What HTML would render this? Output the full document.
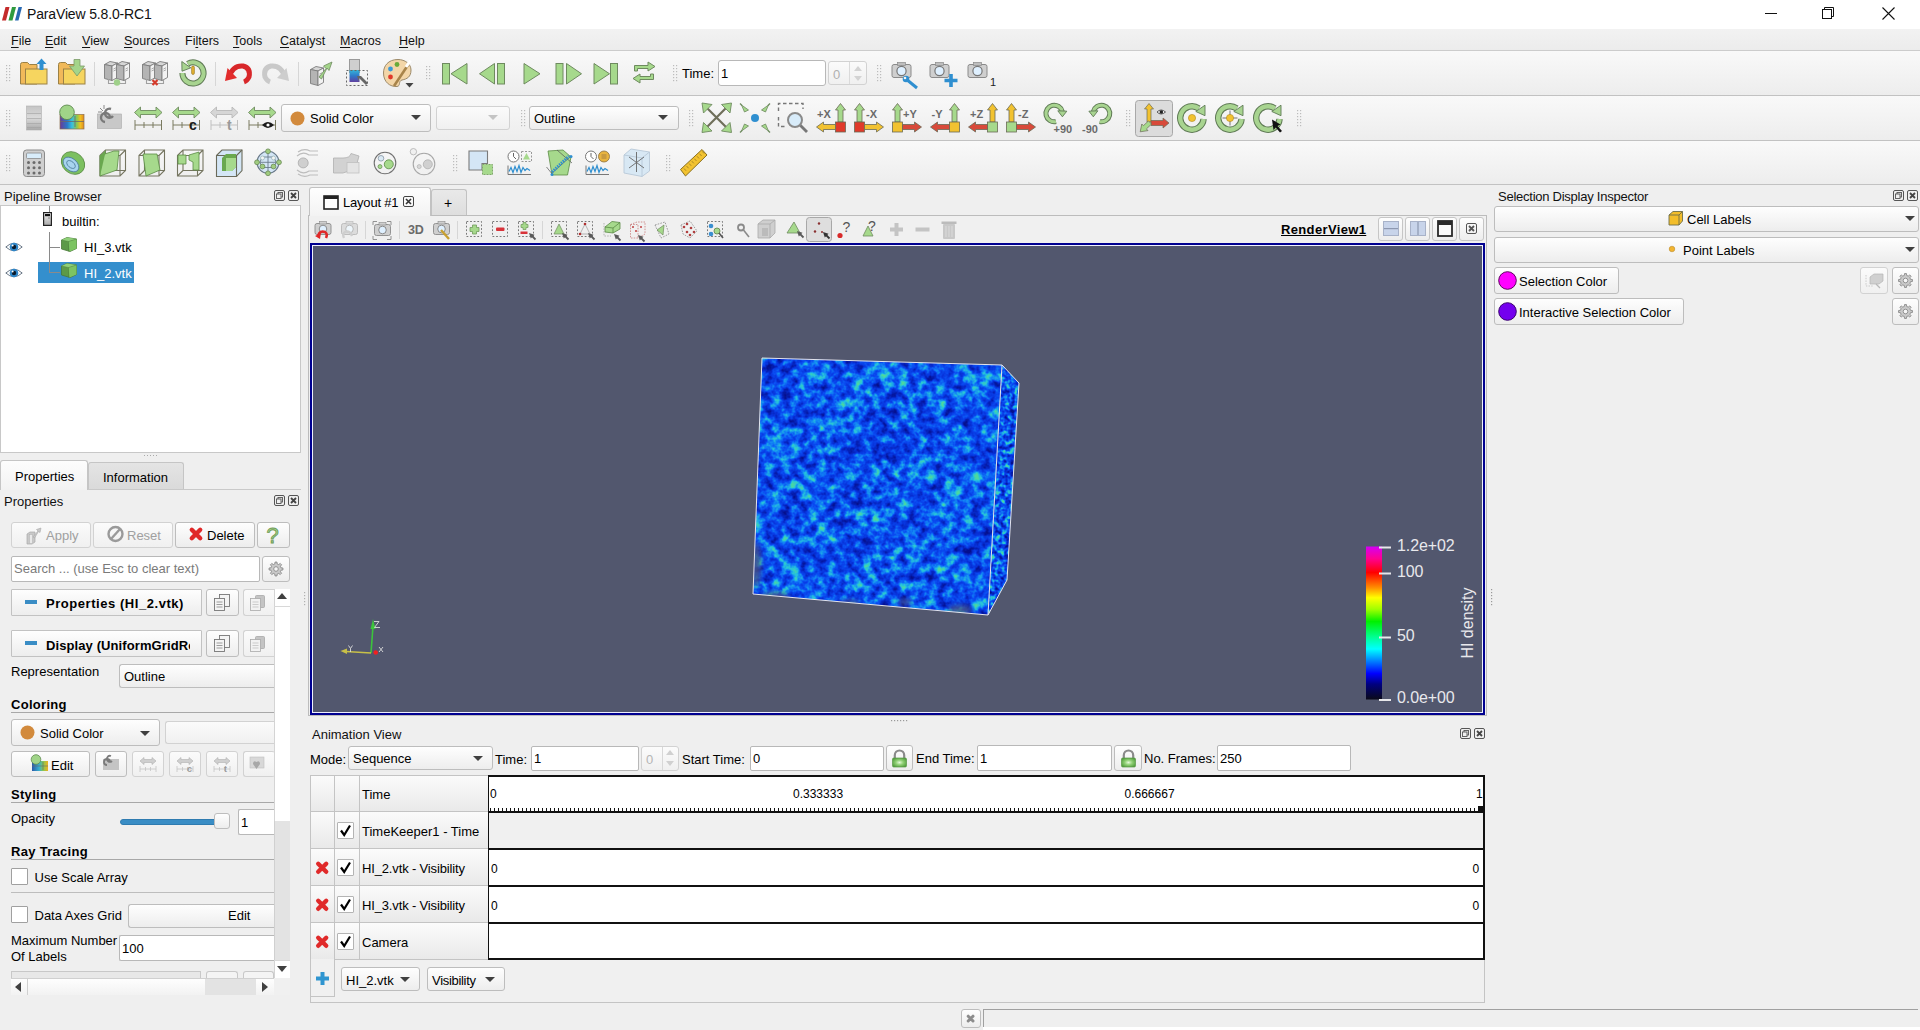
<!DOCTYPE html>
<html><head><meta charset="utf-8"><title>ParaView 5.8.0-RC1</title>
<style>
*{box-sizing:border-box;margin:0;padding:0}
html,body{width:1920px;height:1030px;overflow:hidden;background:#efefef;font-family:"Liberation Sans",sans-serif;font-size:13px;color:#000}
.a{position:absolute}
.t{position:absolute;white-space:nowrap}
.tb{position:absolute;background:linear-gradient(#f9f9f9,#ededed)}
.btn{position:absolute;border:1px solid #bdbdbd;border-radius:3px;background:linear-gradient(#fefefe,#ededed)}
.btnd{position:absolute;border:1px solid #d2d2d2;border-radius:3px;background:linear-gradient(#fbfbfb,#f0f0f0)}
.inp{position:absolute;border:1px solid #b8b8b8;border-radius:2px;background:#fff}
svg{position:absolute;overflow:visible}
u{text-decoration:underline;text-underline-offset:2px}
</style></head><body>

<div class="a" style="left:0px;top:0px;width:1920px;height:29px;background:#fff"></div>
<svg style="left:2px;top:7px" width="20" height="14" viewBox="0 0 20 14"><polygon points="3.5,0 7.5,0 4,13.5 0,13.5" fill="#c42b2b"/><polygon points="10,0 14,0 10.5,13.5 6.5,13.5" fill="#2e9a3e"/><polygon points="16.5,0 20,0 16.5,13.5 13,13.5" fill="#2868b2"/></svg>
<div class="t" style="left:27px;top:6.45px;font-size:14px;line-height:17px;color:#111;letter-spacing:-0.15px">ParaView 5.8.0-RC1</div>
<div class="a" style="left:1765px;top:13px;width:12px;height:1px;background:#111"></div>
<svg style="left:1822px;top:7px" width="13" height="13" viewBox="0 0 13 13"><rect x="0.5" y="2.5" width="9" height="9" fill="none" stroke="#111"/><path d="M2.5 2.5V0.5H11.5V9.5H9.5" fill="none" stroke="#111"/></svg>
<svg style="left:1882px;top:7px" width="13" height="13" viewBox="0 0 13 13"><path d="M0.5 0.5L12.5 12.5M12.5 0.5L0.5 12.5" stroke="#111" stroke-width="1.1"/></svg>
<div class="a" style="left:0px;top:29px;width:1920px;height:22px;background:linear-gradient(#f2f2f2,#ececec);border-bottom:1px solid #cccccc"></div>
<div class="t" style="left:11px;top:33.72px;font-size:12.5px;line-height:15.5px;color:#111;"><u>F</u>ile</div>
<div class="t" style="left:45px;top:33.72px;font-size:12.5px;line-height:15.5px;color:#111;"><u>E</u>dit</div>
<div class="t" style="left:82px;top:33.72px;font-size:12.5px;line-height:15.5px;color:#111;"><u>V</u>iew</div>
<div class="t" style="left:124px;top:33.72px;font-size:12.5px;line-height:15.5px;color:#111;"><u>S</u>ources</div>
<div class="t" style="left:185px;top:33.72px;font-size:12.5px;line-height:15.5px;color:#111;">Fi<u>l</u>ters</div>
<div class="t" style="left:233px;top:33.72px;font-size:12.5px;line-height:15.5px;color:#111;"><u>T</u>ools</div>
<div class="t" style="left:280px;top:33.72px;font-size:12.5px;line-height:15.5px;color:#111;"><u>C</u>atalyst</div>
<div class="t" style="left:340px;top:33.72px;font-size:12.5px;line-height:15.5px;color:#111;"><u>M</u>acros</div>
<div class="t" style="left:399px;top:33.72px;font-size:12.5px;line-height:15.5px;color:#111;"><u>H</u>elp</div>
<div class="tb" style="left:0;top:51px;width:1920px;height:45px;border-bottom:1px solid #c2c2c2"></div>
<div class="tb" style="left:0;top:96px;width:1920px;height:45px;border-bottom:1px solid #c2c2c2"></div>
<div class="tb" style="left:0;top:141px;width:1920px;height:44px;border-bottom:1px solid #c2c2c2"></div>
<svg style="left:0;top:0" width="1920" height="200" viewBox="0 0 1920 200"><rect x="6" y="65" width="1.2" height="1.2" fill="#bcbcbc"/><rect x="9" y="65" width="1.2" height="1.2" fill="#bcbcbc"/><rect x="6" y="68" width="1.2" height="1.2" fill="#bcbcbc"/><rect x="9" y="68" width="1.2" height="1.2" fill="#bcbcbc"/><rect x="6" y="71" width="1.2" height="1.2" fill="#bcbcbc"/><rect x="9" y="71" width="1.2" height="1.2" fill="#bcbcbc"/><rect x="6" y="74" width="1.2" height="1.2" fill="#bcbcbc"/><rect x="9" y="74" width="1.2" height="1.2" fill="#bcbcbc"/><rect x="6" y="77" width="1.2" height="1.2" fill="#bcbcbc"/><rect x="9" y="77" width="1.2" height="1.2" fill="#bcbcbc"/><rect x="6" y="80" width="1.2" height="1.2" fill="#bcbcbc"/><rect x="9" y="80" width="1.2" height="1.2" fill="#bcbcbc"/><path d="M20.5 84V64.5Q20.5 62.5 22.5 62.5H27.5L29.5 64.5H37V84Z" fill="#f1b95a" stroke="#9b8146"/><rect x="25.5" y="69" width="21.5" height="15" fill="#f6d55f" stroke="#9b8146"/><polygon points="41.5,58.5 46.5,64 43.5,64 43.5,70 39.5,70 39.5,64 36.5,64" fill="#2f8fd0"/><path d="M58.5 84V64.5Q58.5 62.5 60.5 62.5H65.5L67.5 64.5H75V84Z" fill="#f1b95a" stroke="#9b8146"/><rect x="63.5" y="69" width="21.5" height="15" fill="#f6d55f" stroke="#9b8146"/><polygon points="74,59.5 80,59.5 80,66 84.5,66 77,76 69.5,66 74,66" fill="#a4d58a" stroke="#7c9a6a" stroke-width="0.8"/><rect x="94" y="62" width="1" height="24" fill="#d6d6d6"/><polygon points="104.5,64.5 110,61.5 117.5,63 112,66" fill="#d6d6d6" stroke="#7d7d7d" stroke-width="0.9"/><polygon points="104.5,64.5 112,66 112,80.5 104.5,78.5" fill="#b4b4b4" stroke="#7d7d7d" stroke-width="0.9"/><polygon points="112,66 117.5,63 117.5,77.5 112,80.5" fill="#f2f2f2" stroke="#7d7d7d" stroke-width="0.9"/><path d="M113.5 69L116 67.8M113.5 71L116 69.8" stroke="#8a8a8a" stroke-width="0.7"/><polygon points="116.5,64.5 122,61.5 129.5,63 124,66" fill="#d6d6d6" stroke="#7d7d7d" stroke-width="0.9"/><polygon points="116.5,64.5 124,66 124,80.5 116.5,78.5" fill="#b4b4b4" stroke="#7d7d7d" stroke-width="0.9"/><polygon points="124,66 129.5,63 129.5,77.5 124,80.5" fill="#f2f2f2" stroke="#7d7d7d" stroke-width="0.9"/><path d="M125.5 69L128 67.8M125.5 71L128 69.8" stroke="#8a8a8a" stroke-width="0.7"/><path d="M108.5 79v4.5h17v-4.5" fill="none" stroke="#a0a0a0" stroke-width="1.1"/><circle cx="117" cy="82.5" r="3.2" fill="#9fd08a"/><polygon points="142.5,64.5 148,61.5 155.5,63 150,66" fill="#d6d6d6" stroke="#7d7d7d" stroke-width="0.9"/><polygon points="142.5,64.5 150,66 150,80.5 142.5,78.5" fill="#b4b4b4" stroke="#7d7d7d" stroke-width="0.9"/><polygon points="150,66 155.5,63 155.5,77.5 150,80.5" fill="#f2f2f2" stroke="#7d7d7d" stroke-width="0.9"/><path d="M151.5 69L154 67.8M151.5 71L154 69.8" stroke="#8a8a8a" stroke-width="0.7"/><polygon points="154.5,64.5 160,61.5 167.5,63 162,66" fill="#d6d6d6" stroke="#7d7d7d" stroke-width="0.9"/><polygon points="154.5,64.5 162,66 162,80.5 154.5,78.5" fill="#b4b4b4" stroke="#7d7d7d" stroke-width="0.9"/><polygon points="162,66 167.5,63 167.5,77.5 162,80.5" fill="#f2f2f2" stroke="#7d7d7d" stroke-width="0.9"/><path d="M163.5 69L166 67.8M163.5 71L166 69.8" stroke="#8a8a8a" stroke-width="0.7"/><path d="M146.5 79v4.5h17v-4.5" fill="none" stroke="#a0a0a0" stroke-width="1.1"/><path d="M152.5 80l5 5M157.5 80l-5 5" stroke="#d43a2a" stroke-width="2.2"/><path d="M187.7 63.8A10.6 10.6 0 1 1 182.4 73" fill="none" stroke="#5f7a55" stroke-width="6"/><path d="M187.7 63.8A10.6 10.6 0 1 1 182.4 73" fill="none" stroke="#a8d490" stroke-width="4"/><polygon points="181.8,61.5 182,71.2 190.8,67.8" fill="#a8d490" stroke="#5f7a55" stroke-width="0.9" stroke-linejoin="round"/><rect x="191.6" y="66" width="2.8" height="8.5" rx="1.4" fill="#e0b030" stroke="#907020" stroke-width="0.6"/><rect x="215" y="62" width="1" height="24" fill="#d6d6d6"/><path d="M229 77Q233 65 243 66Q251 68 249 77Q247 81 244 82" fill="none" stroke="#d8272a" stroke-width="5"/><polygon points="225,81 227.5,68 237,78" fill="#e22c2c"/><path d="M285 77Q281 65 271 66Q263 68 265 77Q267 81 270 82" fill="none" stroke="#c9c9c9" stroke-width="5"/><polygon points="289,81 286.5,68 277,78" fill="#cdcdcd"/><rect x="298" y="62" width="1" height="24" fill="#d6d6d6"/><polygon points="310.5,69.5 316,66.5 323.5,68 318,71" fill="#d6d6d6" stroke="#7d7d7d" stroke-width="0.9"/><polygon points="310.5,69.5 318,71 318,85.5 310.5,83.5" fill="#b4b4b4" stroke="#7d7d7d" stroke-width="0.9"/><polygon points="318,71 323.5,68 323.5,82.5 318,85.5" fill="#f2f2f2" stroke="#7d7d7d" stroke-width="0.9"/><path d="M319.5 74L322 72.8M319.5 76L322 74.8" stroke="#8a8a8a" stroke-width="0.7"/><polygon points="319,77 326,68.5 323.5,66 332,62 329,70.5 327,68 321.5,79" fill="#a4d58a" stroke="#6e8a5f" stroke-width="0.8"/><rect x="349.5" y="59.5" width="10" height="13" fill="#cfcfcf" stroke="#9a9a9a"/><rect x="349.5" y="70" width="10" height="12" fill="url(#lg1)"/><rect x="346.5" y="70.5" width="21" height="15" fill="none" stroke="#666" stroke-dasharray="2,2"/><polygon points="361,76 368,83 366,85 359,78 359,82 357,76" fill="#666"/><defs><linearGradient id="lg1" x1="0" y1="0" x2="0" y2="1"><stop offset="0" stop-color="#36b7d8"/><stop offset="0.5" stop-color="#2f78c8"/><stop offset="1" stop-color="#6040a0"/></linearGradient></defs><path d="M398 59.5C388 59.5 383.5 66 383.5 73C383.5 82 390 87 397 86.5C401 86 398 81 402 80C407 79 411 77 411 70C411 64 405 59.5 398 59.5Z" fill="#f3d6a8" stroke="#9c8a6a"/><circle cx="390.5" cy="69" r="2.4" fill="#3a9ad8"/><circle cx="397" cy="64.5" r="2.4" fill="#6aaa3a"/><circle cx="390.5" cy="77" r="2.4" fill="#e03a2a"/><path d="M394 86L408 65" stroke="#a8844a" stroke-width="2.6"/><path d="M406 67L410.5 60.5" stroke="#fff" stroke-width="3"/><polygon points="405.5,83 413.5,83 409.5,87.5" fill="#444"/><rect x="426" y="66" width="1.2" height="1.2" fill="#bcbcbc"/><rect x="429" y="66" width="1.2" height="1.2" fill="#bcbcbc"/><rect x="426" y="69" width="1.2" height="1.2" fill="#bcbcbc"/><rect x="429" y="69" width="1.2" height="1.2" fill="#bcbcbc"/><rect x="426" y="72" width="1.2" height="1.2" fill="#bcbcbc"/><rect x="429" y="72" width="1.2" height="1.2" fill="#bcbcbc"/><rect x="426" y="75" width="1.2" height="1.2" fill="#bcbcbc"/><rect x="429" y="75" width="1.2" height="1.2" fill="#bcbcbc"/><rect x="426" y="78" width="1.2" height="1.2" fill="#bcbcbc"/><rect x="429" y="78" width="1.2" height="1.2" fill="#bcbcbc"/><rect x="442.5" y="63.5" width="7.0" height="20.5" fill="#a6d98c" stroke="#6e8a5f"/><polygon points="467,63.5 467,84 451,73.75" fill="#a6d98c" stroke="#6e8a5f"/><polygon points="494.5,63.5 494.5,84 479.5,73.75" fill="#a6d98c" stroke="#6e8a5f"/><rect x="497.5" y="63.5" width="7.0" height="20.5" fill="#a6d98c" stroke="#6e8a5f"/><polygon points="524,63.5 524,84 540,73.75" fill="#a6d98c" stroke="#6e8a5f"/><rect x="556" y="63.5" width="7" height="20.5" fill="#a6d98c" stroke="#6e8a5f"/><polygon points="566.5,63.5 566.5,84 581.5,73.75" fill="#a6d98c" stroke="#6e8a5f"/><polygon points="594,63.5 594,84 609.5,73.75" fill="#a6d98c" stroke="#6e8a5f"/><rect x="610.5" y="63.5" width="7.0" height="20.5" fill="#a6d98c" stroke="#6e8a5f"/><path d="M634.5 71V65.5H648V62L655 66.5L648 71V68.5H637.5V71Z" fill="#a6d98c" stroke="#6e8a5f"/><path d="M653.5 74V79.5H640V83L633 78.5L640 74V76.5H650.5V74Z" fill="#a6d98c" stroke="#6e8a5f"/><rect x="673" y="65" width="1.2" height="1.2" fill="#bcbcbc"/><rect x="676" y="65" width="1.2" height="1.2" fill="#bcbcbc"/><rect x="673" y="68" width="1.2" height="1.2" fill="#bcbcbc"/><rect x="676" y="68" width="1.2" height="1.2" fill="#bcbcbc"/><rect x="673" y="71" width="1.2" height="1.2" fill="#bcbcbc"/><rect x="676" y="71" width="1.2" height="1.2" fill="#bcbcbc"/><rect x="673" y="74" width="1.2" height="1.2" fill="#bcbcbc"/><rect x="676" y="74" width="1.2" height="1.2" fill="#bcbcbc"/><rect x="673" y="77" width="1.2" height="1.2" fill="#bcbcbc"/><rect x="676" y="77" width="1.2" height="1.2" fill="#bcbcbc"/><rect x="673" y="80" width="1.2" height="1.2" fill="#bcbcbc"/><rect x="676" y="80" width="1.2" height="1.2" fill="#bcbcbc"/><rect x="877" y="65" width="1.2" height="1.2" fill="#bcbcbc"/><rect x="880" y="65" width="1.2" height="1.2" fill="#bcbcbc"/><rect x="877" y="68" width="1.2" height="1.2" fill="#bcbcbc"/><rect x="880" y="68" width="1.2" height="1.2" fill="#bcbcbc"/><rect x="877" y="71" width="1.2" height="1.2" fill="#bcbcbc"/><rect x="880" y="71" width="1.2" height="1.2" fill="#bcbcbc"/><rect x="877" y="74" width="1.2" height="1.2" fill="#bcbcbc"/><rect x="880" y="74" width="1.2" height="1.2" fill="#bcbcbc"/><rect x="877" y="77" width="1.2" height="1.2" fill="#bcbcbc"/><rect x="880" y="77" width="1.2" height="1.2" fill="#bcbcbc"/><rect x="877" y="80" width="1.2" height="1.2" fill="#bcbcbc"/><rect x="880" y="80" width="1.2" height="1.2" fill="#bcbcbc"/><rect x="892.0" y="64.5" width="19" height="13" rx="2" fill="#cfcfcf" stroke="#8a8a8a"/><rect x="897.5" y="62.5" width="8" height="3" fill="#bdbdbd" stroke="#8a8a8a" stroke-width="0.7"/><circle cx="901.5" cy="71" r="4.6" fill="#dff0ff" stroke="#777" stroke-width="1.2"/><path d="M906 79L917 88" stroke="#2f8fd0" stroke-width="3"/><circle cx="906" cy="79" r="3.3" fill="#2f8fd0"/><circle cx="905" cy="78" r="1.3" fill="#f4f4f4"/><rect x="930.0" y="64.5" width="19" height="13" rx="2" fill="#cfcfcf" stroke="#8a8a8a"/><rect x="935.5" y="62.5" width="8" height="3" fill="#bdbdbd" stroke="#8a8a8a" stroke-width="0.7"/><circle cx="939.5" cy="71" r="4.6" fill="#dff0ff" stroke="#777" stroke-width="1.2"/><path d="M951 74V87M944.5 80.5H957.5" stroke="#2f8fd0" stroke-width="3.6"/><rect x="968.0" y="64.5" width="19" height="13" rx="2" fill="#cfcfcf" stroke="#8a8a8a"/><rect x="973.5" y="62.5" width="8" height="3" fill="#bdbdbd" stroke="#8a8a8a" stroke-width="0.7"/><circle cx="977.5" cy="71" r="4.6" fill="#dff0ff" stroke="#777" stroke-width="1.2"/></svg>
<div class="t" style="left:682px;top:66.10px;font-size:13px;line-height:16px;">Time:</div>
<div class="inp" style="left:718px;top:60px;width:108px;height:26px;border-radius:3px"></div>
<div class="t" style="left:721px;top:66.00px;font-size:13px;line-height:16px;">1</div>
<div class="btnd" style="left:828px;top:61px;width:39px;height:24px;"></div>
<div class="a" style="left:849px;top:62px;width:1px;height:22px;background:#dadada"></div>
<div class="t" style="left:833px;top:66.50px;font-size:13px;line-height:16px;color:#b0b0b0;">0</div>
<svg style="left:854px;top:65.5px" width="8" height="5" viewBox="0 0 8 5"><polygon points="0,5 8,5 4,0" fill="#d3d3d3"/></svg>
<svg style="left:854px;top:76px" width="8" height="5" viewBox="0 0 8 5"><polygon points="0,0 8,0 4,5" fill="#d3d3d3"/></svg>
<div class="t" style="left:990px;top:74.69px;font-size:11px;line-height:14px;color:#222;">1</div>
<svg style="left:0;top:0" width="1920" height="200" viewBox="0 0 1920 200"><rect x="6" y="110" width="1.2" height="1.2" fill="#bcbcbc"/><rect x="9" y="110" width="1.2" height="1.2" fill="#bcbcbc"/><rect x="6" y="113" width="1.2" height="1.2" fill="#bcbcbc"/><rect x="9" y="113" width="1.2" height="1.2" fill="#bcbcbc"/><rect x="6" y="116" width="1.2" height="1.2" fill="#bcbcbc"/><rect x="9" y="116" width="1.2" height="1.2" fill="#bcbcbc"/><rect x="6" y="119" width="1.2" height="1.2" fill="#bcbcbc"/><rect x="9" y="119" width="1.2" height="1.2" fill="#bcbcbc"/><rect x="6" y="122" width="1.2" height="1.2" fill="#bcbcbc"/><rect x="9" y="122" width="1.2" height="1.2" fill="#bcbcbc"/><rect x="6" y="125" width="1.2" height="1.2" fill="#bcbcbc"/><rect x="9" y="125" width="1.2" height="1.2" fill="#bcbcbc"/><defs><linearGradient id="gbar" x1="0" y1="0" x2="0" y2="1"><stop offset="0" stop-color="#c4c4c4"/><stop offset="0.5" stop-color="#dadada"/><stop offset="1" stop-color="#a8a8a8"/></linearGradient><linearGradient id="cbar" x1="0" y1="0" x2="1" y2="0"><stop offset="0" stop-color="#6a3a98"/><stop offset="0.3" stop-color="#2a78c8"/><stop offset="0.5" stop-color="#38c0e0"/><stop offset="0.7" stop-color="#88c850"/><stop offset="0.85" stop-color="#f0c020"/><stop offset="1" stop-color="#e08a20"/></linearGradient></defs><rect x="26.5" y="106" width="15" height="24" fill="url(#gbar)" stroke="#b0b0b0" stroke-width="0.6"/><rect x="27" y="113" width="14" height="1" fill="#a0a0a0" opacity="0.6"/><rect x="27" y="118" width="14" height="1" fill="#a0a0a0" opacity="0.6"/><rect x="27" y="123" width="14" height="1" fill="#a0a0a0" opacity="0.6"/><rect x="27" y="127" width="14" height="1" fill="#a0a0a0" opacity="0.6"/><rect x="60" y="114.5" width="24" height="14.5" fill="url(#cbar)" stroke="#8a7050" stroke-width="0.7"/><path d="M60 121.5H84M75 116V127" stroke="#6a6a6a" stroke-width="0.8"/><circle cx="67" cy="112.3" r="7.3" fill="#a0d488" stroke="#5f8a50" stroke-width="0.9"/><rect x="97.5" y="114" width="24" height="14.5" fill="#c8c8c8" stroke="#aaa" stroke-width="0.6"/><path d="M105 122A4.5 4.5 0 1 1 110 118M113 116A4.5 4.5 0 1 1 111 109" fill="none" stroke="#7a7a7a" stroke-width="2.4"/><path d="M100 108L103 111M104 105V109M98 112H102" stroke="#8a8a8a" stroke-width="1"/><polygon points="134.5,112.5 140.5,107 140.5,110.5 156.0,110.5 156.0,107 162.0,112.5 156.0,118 156.0,114.5 140.5,114.5 140.5,118" fill="#a6d98c" stroke="#6e8a5f" stroke-width="0.9"/><path d="M135.0 120V130M135.0 125H161.5M161.5 120V130M144.0 122V128M153.0 122V128" stroke="#7a7a60" stroke-width="1"/><polygon points="172.5,112.5 178.5,107 178.5,110.5 194.0,110.5 194.0,107 200.0,112.5 194.0,118 194.0,114.5 178.5,114.5 178.5,118" fill="#a6d98c" stroke="#6e8a5f" stroke-width="0.9"/><path d="M173.0 120V130M173.0 125H199.5M199.5 120V130M182.0 122V128M191.0 122V128" stroke="#7a7a60" stroke-width="1"/><text x="189" y="130" font-family="Liberation Sans" font-weight="bold" font-size="14" fill="#1a1a1a">c</text><polygon points="210.5,112.5 216.5,107 216.5,110.5 232.0,110.5 232.0,107 238.0,112.5 232.0,118 232.0,114.5 216.5,114.5 216.5,118" fill="#d6d6d6" stroke="#b8b8b8" stroke-width="0.9"/><path d="M211.0 120V130M211.0 125H237.5M237.5 120V130M220.0 122V128M229.0 122V128" stroke="#c0c0c0" stroke-width="1"/><text x="227" y="130" font-family="Liberation Sans" font-weight="bold" font-size="14" fill="#9a9a9a">t</text><polygon points="248.5,112.5 254.5,107 254.5,110.5 270.0,110.5 270.0,107 276.0,112.5 270.0,118 270.0,114.5 254.5,114.5 254.5,118" fill="#a6d98c" stroke="#6e8a5f" stroke-width="0.9"/><path d="M249.0 120V130M249.0 125H275.5M275.5 120V130M258.0 122V128M267.0 122V128" stroke="#7a7a60" stroke-width="1"/><path d="M262 125Q268 119 274 125Q268 131 262 125Z" fill="#1a1a1a"/><circle cx="268" cy="125" r="1.6" fill="#fff"/><rect x="521" y="110" width="1.2" height="1.2" fill="#bcbcbc"/><rect x="524" y="110" width="1.2" height="1.2" fill="#bcbcbc"/><rect x="521" y="113" width="1.2" height="1.2" fill="#bcbcbc"/><rect x="524" y="113" width="1.2" height="1.2" fill="#bcbcbc"/><rect x="521" y="116" width="1.2" height="1.2" fill="#bcbcbc"/><rect x="524" y="116" width="1.2" height="1.2" fill="#bcbcbc"/><rect x="521" y="119" width="1.2" height="1.2" fill="#bcbcbc"/><rect x="524" y="119" width="1.2" height="1.2" fill="#bcbcbc"/><rect x="521" y="122" width="1.2" height="1.2" fill="#bcbcbc"/><rect x="524" y="122" width="1.2" height="1.2" fill="#bcbcbc"/><rect x="521" y="125" width="1.2" height="1.2" fill="#bcbcbc"/><rect x="524" y="125" width="1.2" height="1.2" fill="#bcbcbc"/><rect x="689" y="110" width="1.2" height="1.2" fill="#bcbcbc"/><rect x="692" y="110" width="1.2" height="1.2" fill="#bcbcbc"/><rect x="689" y="113" width="1.2" height="1.2" fill="#bcbcbc"/><rect x="692" y="113" width="1.2" height="1.2" fill="#bcbcbc"/><rect x="689" y="116" width="1.2" height="1.2" fill="#bcbcbc"/><rect x="692" y="116" width="1.2" height="1.2" fill="#bcbcbc"/><rect x="689" y="119" width="1.2" height="1.2" fill="#bcbcbc"/><rect x="692" y="119" width="1.2" height="1.2" fill="#bcbcbc"/><rect x="689" y="122" width="1.2" height="1.2" fill="#bcbcbc"/><rect x="692" y="122" width="1.2" height="1.2" fill="#bcbcbc"/><rect x="689" y="125" width="1.2" height="1.2" fill="#bcbcbc"/><rect x="692" y="125" width="1.2" height="1.2" fill="#bcbcbc"/><path d="M706 107L727 128M727 107L706 128" stroke="#6f6f5a" stroke-width="2.2"/><polygon points="702,103 712,104.5 703.5,113" fill="#a6d98c" stroke="#6e8a5f" stroke-width="0.9"/><polygon points="731.5,103 721.5,104.5 730,113" fill="#a6d98c" stroke="#6e8a5f" stroke-width="0.9"/><polygon points="702,132.5 712,131 703.5,122.5" fill="#a6d98c" stroke="#6e8a5f" stroke-width="0.9"/><polygon points="731.5,132.5 721.5,131 730,122.5" fill="#a6d98c" stroke="#6e8a5f" stroke-width="0.9"/><circle cx="755" cy="118" r="4" fill="#2f8fd0"/><polygon points="741.5,105 748.5,110 744.5,112" fill="#a6d98c" stroke="#6e8a5f" stroke-width="0.8"/><path d="M742.0 105.5L740.0 103.5" stroke="#6e8a5f" stroke-width="1.2"/><polygon points="768.5,105 761.5,110 765.5,112" fill="#a6d98c" stroke="#6e8a5f" stroke-width="0.8"/><path d="M768.0 105.5L770.0 103.5" stroke="#6e8a5f" stroke-width="1.2"/><polygon points="741.5,131 748.5,126 744.5,124" fill="#a6d98c" stroke="#6e8a5f" stroke-width="0.8"/><path d="M742.0 130.5L740.0 132.5" stroke="#6e8a5f" stroke-width="1.2"/><polygon points="768.5,131 761.5,126 765.5,124" fill="#a6d98c" stroke="#6e8a5f" stroke-width="0.8"/><path d="M768.0 130.5L770.0 132.5" stroke="#6e8a5f" stroke-width="1.2"/><path d="M778.5 111V103.5H803V109M778.5 117V126.5H787" fill="none" stroke="#777" stroke-width="1.4" stroke-dasharray="3.5,2.5"/><path d="M800 125L807 132" stroke="#777" stroke-width="2.8"/><circle cx="795" cy="120" r="7" fill="#d8ecfa" stroke="#8a8a8a" stroke-width="2"/><polygon points="840.5,103.5 845.5,110 843.0,110 843.0,122 838.0,122 838.0,110 835.5,110" fill="#a6d98c" stroke="#6a6a55" stroke-width="0.8"/><rect x="835.5" y="122" width="10" height="10" fill="#e03a2a" stroke="#6a6a55" stroke-width="0.8"/><polygon points="835.5,124.5 823.5,124.5 823.5,122 816.5,127 823.5,132 823.5,129.5 835.5,129.5" fill="#f2c230" stroke="#6a6a55" stroke-width="0.8"/><text x="817" y="117.5" font-family="Liberation Sans" font-weight="bold" font-size="11" fill="#6a6a6a">+X</text><polygon points="859.5,103.5 864.5,110 862.0,110 862.0,122 857.0,122 857.0,110 854.5,110" fill="#a6d98c" stroke="#6a6a55" stroke-width="0.8"/><rect x="854.5" y="122" width="10" height="10" fill="#e03a2a" stroke="#6a6a55" stroke-width="0.8"/><polygon points="864.5,124.5 876.5,124.5 876.5,122 883.5,127 876.5,132 876.5,129.5 864.5,129.5" fill="#f2c230" stroke="#6a6a55" stroke-width="0.8"/><text x="866" y="117.5" font-family="Liberation Sans" font-weight="bold" font-size="11" fill="#6a6a6a">-X</text><polygon points="897.5,103.5 902.5,110 900.0,110 900.0,122 895.0,122 895.0,110 892.5,110" fill="#a6d98c" stroke="#6a6a55" stroke-width="0.8"/><rect x="892.5" y="122" width="10" height="10" fill="#f2c230" stroke="#6a6a55" stroke-width="0.8"/><polygon points="902.5,124.5 914.5,124.5 914.5,122 921.5,127 914.5,132 914.5,129.5 902.5,129.5" fill="#d84a3a" stroke="#6a6a55" stroke-width="0.8"/><text x="903" y="117.5" font-family="Liberation Sans" font-weight="bold" font-size="11" fill="#6a6a6a">+Y</text><polygon points="954.5,103.5 959.5,110 957.0,110 957.0,122 952.0,122 952.0,110 949.5,110" fill="#a6d98c" stroke="#6a6a55" stroke-width="0.8"/><rect x="949.5" y="122" width="10" height="10" fill="#f2c230" stroke="#6a6a55" stroke-width="0.8"/><polygon points="949.5,124.5 937.5,124.5 937.5,122 930.5,127 937.5,132 937.5,129.5 949.5,129.5" fill="#d84a3a" stroke="#6a6a55" stroke-width="0.8"/><text x="931.5" y="117.5" font-family="Liberation Sans" font-weight="bold" font-size="11" fill="#6a6a6a">-Y</text><polygon points="992.5,103.5 997.5,110 995.0,110 995.0,122 990.0,122 990.0,110 987.5,110" fill="#f2c230" stroke="#6a6a55" stroke-width="0.8"/><rect x="987.5" y="122" width="10" height="10" fill="#a6d98c" stroke="#6a6a55" stroke-width="0.8"/><polygon points="987.5,124.5 975.5,124.5 975.5,122 968.5,127 975.5,132 975.5,129.5 987.5,129.5" fill="#d84a3a" stroke="#6a6a55" stroke-width="0.8"/><text x="970" y="117.5" font-family="Liberation Sans" font-weight="bold" font-size="11" fill="#6a6a6a">+Z</text><polygon points="1011.5,103.5 1016.5,110 1014.0,110 1014.0,122 1009.0,122 1009.0,110 1006.5,110" fill="#f2c230" stroke="#6a6a55" stroke-width="0.8"/><rect x="1006.5" y="122" width="10" height="10" fill="#a6d98c" stroke="#6a6a55" stroke-width="0.8"/><polygon points="1016.5,124.5 1028.5,124.5 1028.5,122 1035.5,127 1028.5,132 1028.5,129.5 1016.5,129.5" fill="#d84a3a" stroke="#6a6a55" stroke-width="0.8"/><text x="1018" y="117.5" font-family="Liberation Sans" font-weight="bold" font-size="11" fill="#6a6a6a">-Z</text><path d="M1056 121.6A8.3 8.3 0 1 1 1062.3 111.5" fill="none" stroke="#5f7a55" stroke-width="5"/><path d="M1056 121.6A8.3 8.3 0 1 1 1062.3 111.5" fill="none" stroke="#a8d490" stroke-width="3"/><polygon points="1057.8,110.8 1066.8,111.2 1062.4,116.8" fill="#a8d490" stroke="#5f7a55" stroke-width="0.9" stroke-linejoin="round"/><path d="M1099.7 121.6A8.3 8.3 0 1 0 1093.4 111.5" fill="none" stroke="#5f7a55" stroke-width="5"/><path d="M1099.7 121.6A8.3 8.3 0 1 0 1093.4 111.5" fill="none" stroke="#a8d490" stroke-width="3"/><polygon points="1097.9,110.8 1088.9,111.2 1093.3,116.8" fill="#a8d490" stroke="#5f7a55" stroke-width="0.9" stroke-linejoin="round"/><text x="1053.5" y="132.5" font-family="Liberation Sans" font-weight="bold" font-size="11" fill="#6a6a6a">+90</text><text x="1082" y="132.5" font-family="Liberation Sans" font-weight="bold" font-size="11" fill="#6a6a6a">-90</text><rect x="1126" y="110" width="1.2" height="1.2" fill="#bcbcbc"/><rect x="1129" y="110" width="1.2" height="1.2" fill="#bcbcbc"/><rect x="1126" y="113" width="1.2" height="1.2" fill="#bcbcbc"/><rect x="1129" y="113" width="1.2" height="1.2" fill="#bcbcbc"/><rect x="1126" y="116" width="1.2" height="1.2" fill="#bcbcbc"/><rect x="1129" y="116" width="1.2" height="1.2" fill="#bcbcbc"/><rect x="1126" y="119" width="1.2" height="1.2" fill="#bcbcbc"/><rect x="1129" y="119" width="1.2" height="1.2" fill="#bcbcbc"/><rect x="1126" y="122" width="1.2" height="1.2" fill="#bcbcbc"/><rect x="1129" y="122" width="1.2" height="1.2" fill="#bcbcbc"/><rect x="1126" y="125" width="1.2" height="1.2" fill="#bcbcbc"/><rect x="1129" y="125" width="1.2" height="1.2" fill="#bcbcbc"/><rect x="1135.5" y="100.5" width="37" height="36" rx="3" fill="#dcdcdc" stroke="#a8a8a8"/><polygon points="1149,103.5 1153.5,109 1151,109 1151,122 1147,122 1147,109 1144.5,109" fill="#f2c230" stroke="#6a6a55" stroke-width="0.7"/><polygon points="1151,120.5 1163,120.5 1163,118 1169,123 1163,128 1163,125.5 1151,125.5" fill="#d84a3a" stroke="#6a6a55" stroke-width="0.7"/><polygon points="1151.5,124.1 1146.4,128.9 1148.0,130.6 1140.2,131.8 1141.8,124.0 1143.4,125.7 1148.5,120.9" fill="#a6d98c" stroke="#6a6a55" stroke-width="0.7"/><path d="M1157 112Q1161 108 1165.5 112Q1161 116 1157 112Z" fill="#fff" stroke="#333" stroke-width="0.8"/><circle cx="1161.3" cy="112" r="1.8" fill="#222"/><path d="M1198.7 108.4A11.7 11.7 0 1 0 1203.6 119" fill="none" stroke="#5f7a55" stroke-width="6.4"/><path d="M1198.7 108.4A11.7 11.7 0 1 0 1203.6 119" fill="none" stroke="#a8d490" stroke-width="4.4"/><polygon points="1205,105.2 1205,115.7 1195.8,111.5" fill="#a8d490" stroke="#5f7a55" stroke-width="0.9" stroke-linejoin="round"/><circle cx="1192" cy="118" r="3.6" fill="#f2c230" stroke="#b08a20" stroke-width="0.6"/><path d="M1236.7 108.4A11.7 11.7 0 1 0 1241.6 119" fill="none" stroke="#5f7a55" stroke-width="6.4"/><path d="M1236.7 108.4A11.7 11.7 0 1 0 1241.6 119" fill="none" stroke="#a8d490" stroke-width="4.4"/><polygon points="1243,105.2 1243,115.7 1233.8,111.5" fill="#a8d490" stroke="#5f7a55" stroke-width="0.9" stroke-linejoin="round"/><path d="M1230 110.5V125.5M1222.5 118H1237.5" stroke="#777" stroke-width="1"/><circle cx="1230" cy="118" r="3.6" fill="#f2c230" stroke="#b08a20" stroke-width="0.6"/><path d="M1274.7 108.4A11.7 11.7 0 1 0 1279.6 119" fill="none" stroke="#5f7a55" stroke-width="6.4"/><path d="M1274.7 108.4A11.7 11.7 0 1 0 1279.6 119" fill="none" stroke="#a8d490" stroke-width="4.4"/><polygon points="1281,105.2 1281,115.7 1271.8,111.5" fill="#a8d490" stroke="#5f7a55" stroke-width="0.9" stroke-linejoin="round"/><polygon points="1272,119.5 1280.5,124.5 1277.5,126 1282,131 1280,132.5 1275.8,127.5 1273.5,130" fill="#111"/><rect x="1297" y="110" width="1.2" height="1.2" fill="#bcbcbc"/><rect x="1300" y="110" width="1.2" height="1.2" fill="#bcbcbc"/><rect x="1297" y="113" width="1.2" height="1.2" fill="#bcbcbc"/><rect x="1300" y="113" width="1.2" height="1.2" fill="#bcbcbc"/><rect x="1297" y="116" width="1.2" height="1.2" fill="#bcbcbc"/><rect x="1300" y="116" width="1.2" height="1.2" fill="#bcbcbc"/><rect x="1297" y="119" width="1.2" height="1.2" fill="#bcbcbc"/><rect x="1300" y="119" width="1.2" height="1.2" fill="#bcbcbc"/><rect x="1297" y="122" width="1.2" height="1.2" fill="#bcbcbc"/><rect x="1300" y="122" width="1.2" height="1.2" fill="#bcbcbc"/><rect x="1297" y="125" width="1.2" height="1.2" fill="#bcbcbc"/><rect x="1300" y="125" width="1.2" height="1.2" fill="#bcbcbc"/><rect x="6" y="155" width="1.2" height="1.2" fill="#bcbcbc"/><rect x="9" y="155" width="1.2" height="1.2" fill="#bcbcbc"/><rect x="6" y="158" width="1.2" height="1.2" fill="#bcbcbc"/><rect x="9" y="158" width="1.2" height="1.2" fill="#bcbcbc"/><rect x="6" y="161" width="1.2" height="1.2" fill="#bcbcbc"/><rect x="9" y="161" width="1.2" height="1.2" fill="#bcbcbc"/><rect x="6" y="164" width="1.2" height="1.2" fill="#bcbcbc"/><rect x="9" y="164" width="1.2" height="1.2" fill="#bcbcbc"/><rect x="6" y="167" width="1.2" height="1.2" fill="#bcbcbc"/><rect x="9" y="167" width="1.2" height="1.2" fill="#bcbcbc"/><rect x="6" y="170" width="1.2" height="1.2" fill="#bcbcbc"/><rect x="9" y="170" width="1.2" height="1.2" fill="#bcbcbc"/><rect x="23.5" y="150" width="21" height="26.5" rx="3" fill="#cfcfcf" stroke="#8a8a8a"/><rect x="26.5" y="153" width="15" height="5.5" rx="1" fill="#d8ecfa" stroke="#8a8a8a" stroke-width="0.8"/><circle cx="28.5" cy="162.5" r="1.5" fill="#6a6a6a"/><circle cx="34.0" cy="162.5" r="1.5" fill="#6a6a6a"/><circle cx="39.5" cy="162.5" r="1.5" fill="#6a6a6a"/><circle cx="28.5" cy="167.7" r="1.5" fill="#6a6a6a"/><circle cx="34.0" cy="167.7" r="1.5" fill="#6a6a6a"/><circle cx="39.5" cy="167.7" r="1.5" fill="#6a6a6a"/><circle cx="28.5" cy="172.9" r="1.5" fill="#6a6a6a"/><circle cx="34.0" cy="172.9" r="1.5" fill="#6a6a6a"/><circle cx="39.5" cy="172.9" r="1.5" fill="#6a6a6a"/><ellipse cx="73" cy="163" rx="12.5" ry="10.5" transform="rotate(40 73 163)" fill="#7cc060" stroke="#5a8a45" stroke-width="0.8"/><ellipse cx="71" cy="164.5" rx="9" ry="6" transform="rotate(40 71 164.5)" fill="#a8d4ef" stroke="#4a7a9a" stroke-width="0.8"/><ellipse cx="71" cy="164.5" rx="5" ry="3" transform="rotate(40 71 164.5)" fill="none" stroke="#4a7a9a" stroke-width="0.8"/><path d="M100.0 155.5L105.5 150.0H125.5V170.5L120.0 176.0H100.0Z M100.0 155.5H120.0V176.0 M120.0 155.5L125.5 150.0 M105.5 150.0V170.5H125.5 M105.5 170.5L100.0 176.0" fill="none" stroke="#757560" stroke-width="1.1"/><polygon points="100,155.5 114,151 119,151 117,170 100,176" fill="#a6d98c" stroke="#5a8a45" stroke-width="0.8"/><polygon points="100,155.5 106,150 100,176" fill="#6aa84f"/><path d="M139.0 155.5L144.5 150.0H164.5V170.5L159.0 176.0H139.0Z M139.0 155.5H159.0V176.0 M159.0 155.5L164.5 150.0 M144.5 150.0V170.5H164.5 M144.5 170.5L139.0 176.0" fill="none" stroke="#757560" stroke-width="1.1"/><polygon points="143,154 157,154 160,170 146,176" fill="#a6d98c" stroke="#5a8a45" stroke-width="0.8"/><path d="M177.5 155.5L183 150.0H203V170.5L197.5 176.0H177.5Z M177.5 155.5H197.5V176.0 M197.5 155.5L203 150.0 M183 150.0V170.5H203 M183 170.5L177.5 176.0" fill="none" stroke="#757560" stroke-width="1.1"/><polygon points="178,155 186,155 186,164 178,164" fill="#a6d98c" stroke="#5a8a45" stroke-width="0.8"/><polygon points="189,155 199,152 199,170 193,170 193,162 189,160" fill="#a6d98c" stroke="#5a8a45" stroke-width="0.8"/><polygon points="216.5,155.5 222,150 242,150 242,170.5 236.5,176.5 216.5,176.5" fill="#d4e6f6" stroke="#6a6a5a" stroke-width="1.1"/><path d="M216.5 155.5H236.5V176.5M236.5 155.5L242 150" fill="none" stroke="#6a6a5a" stroke-width="1.1"/><polygon points="222,158 226,154 236,154 236,167 232,171 222,171" fill="#6aa84f"/><polygon points="226,158 236,158 236,167 232,171 226,171" fill="#a6d98c"/><circle cx="268" cy="162.3" r="11" fill="#d4e6f6" stroke="#6a7a8a" stroke-width="1.1"/><path d="M268 151.3V173.3M257 162.3H279M262 157H274M262 167.5H274M262 157L260 162.3L262 167.5M274 157L276 162.3L274 167.5" fill="none" stroke="#6a7a8a" stroke-width="0.9"/><circle cx="268" cy="151.3" r="2.4" fill="#a0cc80" stroke="#6a8a55" stroke-width="0.8"/><circle cx="268" cy="173.3" r="2.4" fill="#a0cc80" stroke="#6a8a55" stroke-width="0.8"/><circle cx="257" cy="162.3" r="2.4" fill="#a0cc80" stroke="#6a8a55" stroke-width="0.8"/><circle cx="279" cy="162.3" r="2.4" fill="#a0cc80" stroke="#6a8a55" stroke-width="0.8"/><circle cx="262.5" cy="166.5" r="2.4" fill="#a0cc80" stroke="#6a8a55" stroke-width="0.8"/><circle cx="273.5" cy="166.5" r="2.4" fill="#a0cc80" stroke="#6a8a55" stroke-width="0.8"/><circle cx="262.5" cy="158" r="2" fill="#f4f4f4" stroke="#8aa" stroke-width="0.6"/><circle cx="273.5" cy="158" r="2" fill="#f4f4f4" stroke="#8aa" stroke-width="0.6"/><circle cx="303.2" cy="162.9" r="5" fill="#cfcfcf" stroke="#aaa" stroke-width="0.8"/><path d="M297 156Q303 151 309 155H318M298 152Q304 148 310 151H318M297 170Q303 175 309 171H318M298 174Q304 178 310 175H318" fill="none" stroke="#bdbdbd" stroke-width="1.2"/><path d="M333.5 158H343Q350 158 351 153.5L359 156Q357 170 343 173H333.5Z" fill="#d2d2d2" stroke="#b0b0b0" stroke-width="0.8"/><rect x="347" y="162.5" width="12" height="10.5" fill="#e4e4e4" stroke="#c0c0c0" stroke-width="0.8"/><circle cx="385" cy="163" r="10.8" fill="none" stroke="#707070" stroke-width="1.1"/><circle cx="388.8" cy="164.3" r="4.5" fill="#a6d98c" stroke="#5a8a45" stroke-width="0.8"/><circle cx="381" cy="158.3" r="2.8" fill="#dbeaf4" stroke="#7a8a9a" stroke-width="0.7"/><circle cx="380" cy="166.6" r="2" fill="#a6d98c" stroke="#5a8a45" stroke-width="0.7"/><circle cx="424" cy="164" r="10.8" fill="none" stroke="#a8a8a8" stroke-width="1.1"/><circle cx="413.4" cy="151.7" r="3.2" fill="#f0f0f0" stroke="#b0b0b0" stroke-width="0.8"/><circle cx="427.8" cy="164.3" r="4.5" fill="#d0d0d0" stroke="#b0b0b0" stroke-width="0.8"/><circle cx="419.2" cy="166.6" r="2" fill="#d8d8d8" stroke="#b0b0b0" stroke-width="0.7"/><rect x="453" y="155" width="1.2" height="1.2" fill="#bcbcbc"/><rect x="456" y="155" width="1.2" height="1.2" fill="#bcbcbc"/><rect x="453" y="158" width="1.2" height="1.2" fill="#bcbcbc"/><rect x="456" y="158" width="1.2" height="1.2" fill="#bcbcbc"/><rect x="453" y="161" width="1.2" height="1.2" fill="#bcbcbc"/><rect x="456" y="161" width="1.2" height="1.2" fill="#bcbcbc"/><rect x="453" y="164" width="1.2" height="1.2" fill="#bcbcbc"/><rect x="456" y="164" width="1.2" height="1.2" fill="#bcbcbc"/><rect x="453" y="167" width="1.2" height="1.2" fill="#bcbcbc"/><rect x="456" y="167" width="1.2" height="1.2" fill="#bcbcbc"/><rect x="453" y="170" width="1.2" height="1.2" fill="#bcbcbc"/><rect x="456" y="170" width="1.2" height="1.2" fill="#bcbcbc"/><path d="M469 151H487.5V163.5H482V170H469Z" fill="#d4e6f6" stroke="#7a7a7a" stroke-width="1.1"/><rect x="482.5" y="164.5" width="10" height="10" fill="#a6d98c" stroke="#7fa86a" stroke-width="1" stroke-dasharray="2,1"/><circle cx="513.5" cy="156.5" r="5.5" fill="#fff" stroke="#777" stroke-width="1"/><path d="M513.5 153V156.5L516 159" fill="none" stroke="#555" stroke-width="0.9"/><rect x="521.5" y="151.5" width="10" height="10" fill="none" stroke="#999" stroke-dasharray="2,1.5"/><polygon points="526.5,153 530,159.5 523,159.5" fill="#a6d98c"/><path d="M508 165.5V174.5H531" fill="none" stroke="#777" stroke-width="1"/><path d="M509 171.5L511 167.5L513 172.5L515 166.5L517 171.5L519 165.5L521 172.5L523 167.5L525 170.5L527 168.5L530 170.5" fill="none" stroke="#2f8fd0" stroke-width="1.2"/><polygon points="548,151 563,150 571,157 567.5,175 552,175" fill="#a6d98c" stroke="#5a8a45" stroke-width="0.8"/><path d="M546.5 167L553 175M551 174L571 156M557 150L572 163" stroke="#555" stroke-width="0.7"/><path d="M552 172L569 156" stroke="#2f8fd0" stroke-width="3" stroke-dasharray="1.5,1"/><circle cx="552" cy="174.5" r="1.5" fill="#2f8fd0"/><circle cx="571" cy="156.5" r="1.5" fill="#2f8fd0"/><circle cx="591" cy="156.5" r="5.5" fill="#fff" stroke="#777" stroke-width="1"/><path d="M591 153V156.5L593.5 159" fill="none" stroke="#555" stroke-width="0.9"/><circle cx="604" cy="156.5" r="5.5" fill="#e8b440" stroke="#8a7040" stroke-width="0.8"/><rect x="601.5" y="154" width="5" height="5" fill="#c89a40"/><path d="M586 165.5V174.5H609" fill="none" stroke="#777" stroke-width="1"/><path d="M587 171.5L589 167.5L591 172.5L593 166.5L595 171.5L597 165.5L599 172.5L601 167.5L603 170.5L605 168.5L608 170.5" fill="none" stroke="#2f8fd0" stroke-width="1.2"/><polygon points="624,155 631,149 649.5,152 649.5,171 642,176.5 624,173" fill="#d8e8f4" stroke="#b8c8d8" stroke-width="0.9"/><path d="M624 155L642 158V176.5M642 158L649.5 152" fill="none" stroke="#b8c8d8" stroke-width="0.9"/><path d="M636.5 152V172M629 157L644 168M644 157L629 168" stroke="#666" stroke-width="0.9"/><rect x="666" y="155" width="1.2" height="1.2" fill="#bcbcbc"/><rect x="669" y="155" width="1.2" height="1.2" fill="#bcbcbc"/><rect x="666" y="158" width="1.2" height="1.2" fill="#bcbcbc"/><rect x="669" y="158" width="1.2" height="1.2" fill="#bcbcbc"/><rect x="666" y="161" width="1.2" height="1.2" fill="#bcbcbc"/><rect x="669" y="161" width="1.2" height="1.2" fill="#bcbcbc"/><rect x="666" y="164" width="1.2" height="1.2" fill="#bcbcbc"/><rect x="669" y="164" width="1.2" height="1.2" fill="#bcbcbc"/><rect x="666" y="167" width="1.2" height="1.2" fill="#bcbcbc"/><rect x="669" y="167" width="1.2" height="1.2" fill="#bcbcbc"/><rect x="666" y="170" width="1.2" height="1.2" fill="#bcbcbc"/><rect x="669" y="170" width="1.2" height="1.2" fill="#bcbcbc"/><polygon points="680.5,169.5 702,149.5 707,155 685.5,176" fill="#f2c230" stroke="#8a7020" stroke-width="1"/><path d="M684.0 168.5L686.0 170.7" stroke="#8a7020" stroke-width="0.7"/><path d="M686.6 166.05L688.6 168.25" stroke="#8a7020" stroke-width="0.7"/><path d="M689.2 163.6L691.2 165.79999999999998" stroke="#8a7020" stroke-width="0.7"/><path d="M691.8 161.15L693.8 163.35" stroke="#8a7020" stroke-width="0.7"/><path d="M694.4 158.7L696.4 160.89999999999998" stroke="#8a7020" stroke-width="0.7"/><path d="M697.0 156.25L699.0 158.45" stroke="#8a7020" stroke-width="0.7"/><path d="M699.6 153.8L701.6 156.0" stroke="#8a7020" stroke-width="0.7"/><path d="M702.2 151.35L704.2 153.54999999999998" stroke="#8a7020" stroke-width="0.7"/></svg>
<div class="btn" style="left:281px;top:104px;width:150px;height:28px;"></div>
<svg style="left:290px;top:111px" width="15" height="15" viewBox="0 0 15 15"><circle cx="7.5" cy="7.5" r="7" fill="#d28a3c"/></svg>
<div class="t" style="left:310px;top:110.50px;font-size:13px;line-height:16px;">Solid Color</div>
<svg style="left:410.5px;top:115.0px" width="10" height="5" viewBox="0 0 10 5"><polygon points="0,0 10,0 5.0,5" fill="#404040"/></svg>
<div class="btnd" style="left:436px;top:106px;width:74px;height:24px;"></div>
<svg style="left:488.0px;top:115.0px" width="10" height="5" viewBox="0 0 10 5"><polygon points="0,0 10,0 5.0,5" fill="#c4c4c4"/></svg>
<div class="btn" style="left:529px;top:106px;width:150px;height:24px;"></div>
<div class="t" style="left:534px;top:110.50px;font-size:13px;line-height:16px;">Outline</div>
<svg style="left:658.0px;top:115.0px" width="10" height="5" viewBox="0 0 10 5"><polygon points="0,0 10,0 5.0,5" fill="#404040"/></svg>
<div class="t" style="left:4px;top:188.50px;font-size:13px;line-height:16px;color:#111;">Pipeline Browser</div>
<svg style="left:274px;top:190px" width="11" height="11" viewBox="0 0 11 11"><rect x="0.5" y="0.5" width="10" height="10" rx="1.5" fill="none" stroke="#555"/><rect x="4" y="2.5" width="4.5" height="4.5" fill="none" stroke="#555" stroke-width="0.9"/><rect x="2.5" y="4" width="4.5" height="4.5" fill="#f0f0f0" stroke="#555" stroke-width="0.9"/></svg>
<svg style="left:288px;top:190px" width="11" height="11" viewBox="0 0 11 11"><rect x="0.5" y="0.5" width="10" height="10" rx="1.5" fill="none" stroke="#555"/><path d="M3 3L8 8M8 3L3 8" stroke="#444" stroke-width="1.8"/></svg>
<div class="a" style="left:0px;top:205px;width:301px;height:248px;background:#fff;border:1px solid #c8c8c8"></div>
<svg style="left:43px;top:212px" width="9" height="14" viewBox="0 0 9 14"><defs><linearGradient id="srv" x1="0" y1="0" x2="0" y2="1"><stop offset="0" stop-color="#f4f4f4"/><stop offset="1" stop-color="#a8a8a8"/></linearGradient></defs><rect x="0.6" y="0.6" width="7.8" height="12.8" fill="url(#srv)" stroke="#222" stroke-width="1.2"/><rect x="2" y="2" width="5" height="2.2" fill="#111"/><rect x="5.5" y="5.5" width="1" height="1" fill="#333"/></svg>
<div class="t" style="left:62px;top:213.50px;font-size:13px;line-height:16px;">builtin:</div>
<div class="a" style="left:38px;top:262px;width:96px;height:21px;background:#348fcd"></div>
<div class="a" style="left:49px;top:206px;width:1px;height:6px;background:#8a8a8a"></div>
<div class="a" style="left:49px;top:232px;width:1px;height:41px;background:#8a8a8a"></div>
<div class="a" style="left:49px;top:247px;width:11px;height:1px;background:#8a8a8a"></div>
<div class="a" style="left:49px;top:272px;width:11px;height:1px;background:#8a8a8a"></div>
<svg style="left:61px;top:237px" width="17" height="15" viewBox="0 0 17 15"><polygon points="0.5,3 6,0.5 15.5,2 15.5,11.5 9,14.5 0.5,12" fill="#5c9a48" stroke="#4a7a3a" stroke-width="0.8"/><polygon points="7.5,4.5 15.5,2 15.5,11.5 8.5,14.5" fill="#7cc462"/><polygon points="0.5,3 6,0.5 15.5,2 7.5,4.5" fill="#8fcf78"/><path d="M7.5 4.5V14.5M0.5 3L7.5 4.5L15.5 2" fill="none" stroke="#4a7a3a" stroke-width="0.6" opacity="0.7"/></svg>
<svg style="left:61px;top:263px" width="17" height="15" viewBox="0 0 17 15"><polygon points="0.5,3 6,0.5 15.5,2 15.5,11.5 9,14.5 0.5,12" fill="#5c9a48" stroke="#4a7a3a" stroke-width="0.8"/><polygon points="7.5,4.5 15.5,2 15.5,11.5 8.5,14.5" fill="#7cc462"/><polygon points="0.5,3 6,0.5 15.5,2 7.5,4.5" fill="#8fcf78"/><path d="M7.5 4.5V14.5M0.5 3L7.5 4.5L15.5 2" fill="none" stroke="#4a7a3a" stroke-width="0.6" opacity="0.7"/></svg>
<div class="t" style="left:84px;top:239.50px;font-size:13px;line-height:16px;">HI_3.vtk</div>
<div class="t" style="left:84px;top:265.50px;font-size:13px;line-height:16px;color:#fff;">HI_2.vtk</div>
<svg style="left:5px;top:241px" width="18" height="12" viewBox="0 0 18 12"><path d="M0.8 6Q9 -1.5 17.2 6Q9 13.5 0.8 6Z" fill="#fff" stroke="#5a6a7a" stroke-width="0.9"/><circle cx="9" cy="6" r="4.3" fill="#2f86c8"/><circle cx="9" cy="6" r="2.2" fill="#0a1a2a"/><circle cx="7.6" cy="4.6" r="1" fill="#fff"/></svg>
<svg style="left:5px;top:267px" width="18" height="12" viewBox="0 0 18 12"><path d="M0.8 6Q9 -1.5 17.2 6Q9 13.5 0.8 6Z" fill="#fff" stroke="#5a6a7a" stroke-width="0.9"/><circle cx="9" cy="6" r="4.3" fill="#2f86c8"/><circle cx="9" cy="6" r="2.2" fill="#0a1a2a"/><circle cx="7.6" cy="4.6" r="1" fill="#fff"/></svg>
<svg style="left:144px;top:455px" width="14" height="2" viewBox="0 0 14 2"><rect x="0" y="0" width="1" height="1" fill="#aaa"/><rect x="3" y="0" width="1" height="1" fill="#aaa"/><rect x="6" y="0" width="1" height="1" fill="#aaa"/><rect x="9" y="0" width="1" height="1" fill="#aaa"/><rect x="12" y="0" width="1" height="1" fill="#aaa"/></svg>
<div class="a" style="left:0px;top:489px;width:301px;height:1px;background:#c9c9c9"></div>
<div class="a" style="left:0;top:460px;width:88px;height:30px;background:linear-gradient(#fdfdfd,#f2f2f2);border:1px solid #c5c5c5;border-bottom:none;border-radius:3px 3px 0 0"></div>
<div class="a" style="left:88px;top:462px;width:96px;height:27px;background:linear-gradient(#e4e4e4,#dadada);border:1px solid #c5c5c5;border-bottom:none;border-radius:3px 3px 0 0"></div>
<div class="t" style="left:15px;top:468.50px;font-size:13px;line-height:16px;">Properties</div>
<div class="t" style="left:103px;top:469.50px;font-size:13px;line-height:16px;">Information</div>
<div class="t" style="left:4px;top:493.50px;font-size:13px;line-height:16px;color:#111;">Properties</div>
<svg style="left:274px;top:495px" width="11" height="11" viewBox="0 0 11 11"><rect x="0.5" y="0.5" width="10" height="10" rx="1.5" fill="none" stroke="#555"/><rect x="4" y="2.5" width="4.5" height="4.5" fill="none" stroke="#555" stroke-width="0.9"/><rect x="2.5" y="4" width="4.5" height="4.5" fill="#f0f0f0" stroke="#555" stroke-width="0.9"/></svg>
<svg style="left:288px;top:495px" width="11" height="11" viewBox="0 0 11 11"><rect x="0.5" y="0.5" width="10" height="10" rx="1.5" fill="none" stroke="#555"/><path d="M3 3L8 8M8 3L3 8" stroke="#444" stroke-width="1.8"/></svg>
<div class="btnd" style="left:11px;top:522px;width:80px;height:26px;"></div>
<div class="btnd" style="left:93px;top:522px;width:80px;height:26px;"></div>
<div class="btn" style="left:175px;top:522px;width:80px;height:26px;"></div>
<div class="btn" style="left:257px;top:522px;width:33px;height:26px;"></div>
<div class="t" style="left:46px;top:527.50px;font-size:13px;line-height:16px;color:#a0a0a0;">Apply</div>
<div class="t" style="left:127px;top:527.50px;font-size:13px;line-height:16px;color:#a0a0a0;">Reset</div>
<div class="t" style="left:207px;top:527.50px;font-size:13px;line-height:16px;">Delete</div>
<div class="inp" style="left:11px;top:556px;width:249px;height:26px;"></div>
<div class="t" style="left:14px;top:560.50px;font-size:13px;line-height:16px;color:#7a7a7a;">Search ... (use Esc to clear text)</div>
<div class="btn" style="left:262px;top:556px;width:28px;height:26px;"></div>
<div class="btn" style="left:11px;top:589px;width:191px;height:27px;border-radius:1px;border-color:#c2c2c2"></div>
<div class="a" style="left:25px;top:600px;width:12px;height:4px;background:#3a8dc5"></div>
<div class="t" style="left:46px;top:595.50px;font-size:13px;line-height:16px;font-weight:bold;letter-spacing:0.55px">Properties (HI_2.vtk)</div>
<div class="btn" style="left:206px;top:589px;width:33px;height:27px;"></div>
<div class="btnd" style="left:243px;top:589px;width:31px;height:27px;border-right:none;border-radius:3px 0 0 3px"></div>
<div class="btn" style="left:11px;top:630px;width:191px;height:27px;border-radius:1px;border-color:#c2c2c2"></div>
<div class="a" style="left:25px;top:641px;width:12px;height:4px;background:#3a8dc5"></div>
<div class="t" style="left:46px;top:637.5px;width:144px;overflow:hidden;font-size:13px;line-height:16px;font-weight:bold;letter-spacing:0.1px">Display (UniformGridRepresentation)</div>
<div class="btn" style="left:206px;top:630px;width:33px;height:27px;"></div>
<div class="btnd" style="left:243px;top:630px;width:31px;height:27px;border-right:none;border-radius:3px 0 0 3px"></div>
<div class="t" style="left:11px;top:664.00px;font-size:13px;line-height:16px;">Representation</div>
<div class="btn" style="left:119px;top:664px;width:160px;height:24px;border-right:none"></div>
<div class="t" style="left:124px;top:668.50px;font-size:13px;line-height:16px;">Outline</div>
<div class="t" style="left:11px;top:696.50px;font-size:13px;line-height:16px;font-weight:bold;letter-spacing:0.3px">Coloring</div>
<div class="a" style="left:11px;top:712px;width:263px;height:1px;background:#a8a8a8"></div>
<div class="btn" style="left:11px;top:719px;width:149px;height:27px;"></div>
<svg style="left:20px;top:725px" width="15" height="15" viewBox="0 0 15 15"><circle cx="7.5" cy="7.5" r="7" fill="#d28a3c"/></svg>
<div class="t" style="left:40px;top:725.50px;font-size:13px;line-height:16px;">Solid Color</div>
<svg style="left:140.0px;top:730.5px" width="10" height="5" viewBox="0 0 10 5"><polygon points="0,0 10,0 5.0,5" fill="#404040"/></svg>
<div class="btnd" style="left:165px;top:721px;width:115px;height:23px;border-right:none"></div>
<div class="btn" style="left:11px;top:751px;width:79px;height:26px;"></div>
<div class="t" style="left:51px;top:757.50px;font-size:13px;line-height:16px;">Edit</div>
<div class="btn" style="left:95px;top:751px;width:32px;height:26px;"></div>
<div class="btnd" style="left:132px;top:751px;width:32px;height:26px;"></div>
<div class="btnd" style="left:169px;top:751px;width:32px;height:26px;"></div>
<div class="btnd" style="left:206px;top:751px;width:32px;height:26px;"></div>
<div class="btnd" style="left:243px;top:751px;width:32px;height:26px;border-right:none"></div>
<div class="t" style="left:11px;top:787.00px;font-size:13px;line-height:16px;font-weight:bold;letter-spacing:0.3px">Styling</div>
<div class="a" style="left:11px;top:802px;width:263px;height:1px;background:#a8a8a8"></div>
<div class="t" style="left:11px;top:810.50px;font-size:13px;line-height:16px;">Opacity</div>
<div class="a" style="left:120px;top:819px;width:108px;height:6px;background:#3a8dc5;border-radius:3px;border:1px solid #2f7bb0"></div>
<div class="btn" style="left:214px;top:813px;width:16px;height:16px;border-radius:3px"></div>
<div class="inp" style="left:238px;top:809px;width:40px;height:26px;border-right:none"></div>
<div class="t" style="left:241px;top:814.50px;font-size:13px;line-height:16px;">1</div>
<div class="t" style="left:11px;top:844.00px;font-size:13px;line-height:16px;font-weight:bold;letter-spacing:0.3px">Ray Tracing</div>
<div class="a" style="left:11px;top:859px;width:263px;height:1px;background:#a8a8a8"></div>
<div class="inp" style="left:11px;top:868px;width:17px;height:17px;border-radius:1px;border-color:#a0a0a0"></div>
<div class="t" style="left:34.5px;top:869.50px;font-size:13px;line-height:16px;">Use Scale Array</div>
<div class="a" style="left:11px;top:892px;width:263px;height:1px;background:#bdbdbd"></div>
<div class="inp" style="left:11px;top:906px;width:17px;height:17px;border-radius:1px;border-color:#a0a0a0"></div>
<div class="t" style="left:34.5px;top:907.50px;font-size:13px;line-height:16px;">Data Axes Grid</div>
<div class="btn" style="left:128px;top:904px;width:150px;height:24px;border-right:none"></div>
<div class="t" style="left:228px;top:908.00px;font-size:13px;line-height:16px;">Edit</div>
<div class="t" style="left:11px;top:933.00px;font-size:13px;line-height:16px;">Maximum Number</div>
<div class="t" style="left:11px;top:948.50px;font-size:13px;line-height:16px;">Of Labels</div>
<div class="inp" style="left:119px;top:935px;width:160px;height:26px;border-right:none"></div>
<div class="t" style="left:122px;top:940.50px;font-size:13px;line-height:16px;">100</div>
<div class="a" style="left:11px;top:971px;width:190px;height:8px;background:#e8e8e8;border:1px solid #c8c8c8;border-bottom:none"></div>
<div class="a" style="left:206px;top:971px;width:32px;height:8px;background:#f4f4f4;border:1px solid #c8c8c8;border-bottom:none;border-radius:3px 3px 0 0"></div>
<div class="a" style="left:243px;top:971px;width:31px;height:8px;background:#f4f4f4;border:1px solid #c8c8c8;border-bottom:none;border-radius:3px 3px 0 0"></div>
<div class="a" style="left:274px;top:589px;width:16px;height:390px;background:#fff;border-left:1px solid #d4d4d4"></div>
<div class="a" style="left:274px;top:821px;width:16px;height:140px;background:#e3e3e3;border-left:1px solid #d0d0d0"></div>
<div class="a" style="left:274px;top:606px;width:16px;height:1px;background:#d8d8d8"></div>
<div class="a" style="left:274px;top:960px;width:16px;height:1px;background:#d8d8d8"></div>
<svg style="left:277px;top:593px" width="10" height="6" viewBox="0 0 10 6"><polygon points="0,6 10,6 5,0" fill="#404040"/></svg>
<svg style="left:277px;top:966px" width="10" height="6" viewBox="0 0 10 6"><polygon points="0,0 10,0 5,6" fill="#404040"/></svg>
<div class="a" style="left:11px;top:978px;width:263px;height:17px;background:linear-gradient(#fefefe,#f2f2f2);border-top:1px solid #d0d0d0"></div>
<div class="a" style="left:27px;top:978px;width:1px;height:17px;background:#d0d0d0"></div>
<div class="a" style="left:205px;top:979px;width:51px;height:16px;background:#e3e3e3"></div>
<svg style="left:15px;top:982px" width="6" height="10" viewBox="0 0 6 10"><polygon points="6,0 6,10 0,5" fill="#404040"/></svg>
<svg style="left:262px;top:982px" width="6" height="10" viewBox="0 0 6 10"><polygon points="0,0 0,10 6,5" fill="#404040"/></svg>
<div class="a" style="left:274px;top:978px;width:16px;height:17px;background:#f0f0f0"></div>
<div class="a" style="left:308px;top:215px;width:1179px;height:501px;border:1px solid #bcbcbc;background:#f0f0f0"></div>
<div class="a" style="left:309px;top:187px;width:122px;height:29px;background:linear-gradient(#fefefe,#f3f3f3);border:1px solid #c2c2c2;border-bottom:none;border-radius:3px 3px 0 0"></div>
<div class="a" style="left:431px;top:189px;width:36px;height:26px;background:linear-gradient(#e9e9e9,#dedede);border:1px solid #c2c2c2;border-bottom:none;border-radius:3px 3px 0 0"></div>
<svg style="left:323px;top:195px" width="16" height="15" viewBox="0 0 16 15"><rect x="1" y="1" width="14" height="13" fill="#fff" stroke="#222" stroke-width="1.6"/><rect x="1" y="1" width="14" height="3" fill="#222"/></svg>
<div class="t" style="left:343px;top:194.50px;font-size:13px;line-height:16px;letter-spacing:-0.2px">Layout #1</div>
<svg style="left:403px;top:196px" width="11" height="11" viewBox="0 0 11 11"><rect x="0.5" y="0.5" width="10" height="10" rx="1.5" fill="none" stroke="#444"/><path d="M3 3L8 8M8 3L3 8" stroke="#333" stroke-width="1.6"/></svg>
<div class="t" style="left:444px;top:194.65px;font-size:14px;line-height:17px;">+</div>
<svg style="left:0;top:0" width="1920" height="300" viewBox="0 0 1920 300"><rect x="315.0" y="223.5" width="16" height="11" rx="2" fill="#cfcfcf" stroke="#8a8a8a" stroke-width="0.9"/><rect x="319.5" y="221.5" width="7" height="2.5" fill="#cfcfcf" stroke="#8a8a8a" stroke-width="0.6"/><circle cx="323.0" cy="229" r="3.8" fill="#dff0ff" stroke="#8a8a8a" stroke-width="1"/><path d="M318 236Q320 230 325 232Q328 234 326 238" fill="none" stroke="#e02828" stroke-width="2.6"/><polygon points="315,236 321,233 320,239" fill="#e02828"/><rect x="341.5" y="223.5" width="16" height="11" rx="2" fill="#dcdcdc" stroke="#b8b8b8" stroke-width="0.9"/><rect x="346" y="221.5" width="7" height="2.5" fill="#dcdcdc" stroke="#b8b8b8" stroke-width="0.6"/><circle cx="349.5" cy="229" r="3.8" fill="#eef6fb" stroke="#b8b8b8" stroke-width="1"/><path d="M352 236Q350 230 345 232Q342 234 344 238" fill="none" stroke="#cfcfcf" stroke-width="2.4"/><rect x="365" y="221" width="1" height="18" fill="#d6d6d6"/><rect x="374.5" y="224.5" width="16" height="11" rx="2" fill="#cfcfcf" stroke="#8a8a8a" stroke-width="0.9"/><rect x="379" y="222.5" width="7" height="2.5" fill="#cfcfcf" stroke="#8a8a8a" stroke-width="0.6"/><circle cx="382.5" cy="230" r="3.8" fill="#dff0ff" stroke="#8a8a8a" stroke-width="1"/><path d="M373 225V221.5H377M387 221.5H391V225M373 236V239.5H377M387 239.5H391V236" fill="none" stroke="#888" stroke-width="0.9"/><rect x="399" y="221" width="1" height="18" fill="#d6d6d6"/><text x="408" y="233.5" font-family="Liberation Sans" font-weight="bold" font-size="12.5" fill="#6a6a6a" letter-spacing="-0.2">3D</text><rect x="433.5" y="223.5" width="16" height="11" rx="2" fill="#cfcfcf" stroke="#8a8a8a" stroke-width="0.9"/><rect x="438" y="221.5" width="7" height="2.5" fill="#cfcfcf" stroke="#8a8a8a" stroke-width="0.6"/><circle cx="441.5" cy="229" r="3.8" fill="#dff0ff" stroke="#8a8a8a" stroke-width="1"/><path d="M441 230L449 239" stroke="#c8a030" stroke-width="2.4"/><rect x="457" y="221" width="1" height="18" fill="#d6d6d6"/><rect x="466.5" y="221.5" width="15" height="15" fill="none" stroke="#6a6a6a" stroke-width="0.9" stroke-dasharray="1.8,1.8"/><polygon points="472.5,225 476.5,225 476.5,227.5 479,227.5 479,231.5 476.5,231.5 476.5,234 472.5,234 472.5,231.5 470,231.5 470,227.5 472.5,227.5" fill="#a6d98c" stroke="#6e9a5a" stroke-width="0.8"/><rect x="492.5" y="221.5" width="15" height="15" fill="none" stroke="#6a6a6a" stroke-width="0.9" stroke-dasharray="1.8,1.8"/><rect x="496" y="227.5" width="8.5" height="3.5" rx="1" fill="#d8333a"/><rect x="518.5" y="221.5" width="15" height="15" fill="none" stroke="#6a6a6a" stroke-width="0.9" stroke-dasharray="1.8,1.8"/><polygon points="523,222.5 526,222.5 526,224.5 528,224.5 528,227.5 526,227.5 526,229.5 523,229.5 523,227.5 521,227.5 521,224.5 523,224.5" fill="#a6d98c" stroke="#6e9a5a" stroke-width="0.7"/><rect x="520.5" y="231.5" width="7" height="2.5" fill="#d8333a"/><path d="M531.5 235.5L535.5 239.5" stroke="#5a5a5a" stroke-width="1.8"/><polygon points="529,233 534.5,234.8 530.8,238.5" fill="#5a5a5a"/><rect x="542" y="221" width="1" height="18" fill="#d6d6d6"/><rect x="551.5" y="221.5" width="15" height="15" fill="none" stroke="#6a6a6a" stroke-width="0.9" stroke-dasharray="1.8,1.8"/><polygon points="559,224 564,234 554,234" fill="#a6d98c" stroke="#6e8a5f" stroke-width="0.7"/><path d="M564.5 235.5L568.5 239.5" stroke="#5a5a5a" stroke-width="1.8"/><polygon points="562,233 567.5,234.8 563.8,238.5" fill="#5a5a5a"/><rect x="577.5" y="221.5" width="15" height="15" fill="none" stroke="#6a6a6a" stroke-width="0.9" stroke-dasharray="1.8,1.8"/><path d="M585 224L590 234H580Z" fill="none" stroke="#999" stroke-width="0.7"/><circle cx="585" cy="224" r="1.3" fill="#b03030"/><circle cx="580" cy="234" r="1.3" fill="#b03030"/><path d="M590.5 235.5L594.5 239.5" stroke="#5a5a5a" stroke-width="1.8"/><polygon points="588,233 593.5,234.8 589.8,238.5" fill="#5a5a5a"/><polygon points="605,227 612,221.5 620,222.5 620,229 613,233 605,232" fill="#a6d98c" stroke="#5a8a45" stroke-width="0.8"/><path d="M605 227L613 228V233M613 228L620 222.5" fill="none" stroke="#5a8a45" stroke-width="0.8"/><path d="M604 223V236H611" fill="none" stroke="#999" stroke-width="0.7" stroke-dasharray="1.5,1.2"/><path d="M616.5 236.5L620.5 240.5" stroke="#5a5a5a" stroke-width="1.8"/><polygon points="614,234 619.5,235.8 615.8,239.5" fill="#5a5a5a"/><path d="M630.5 224.5L637 222H645V234L638 238H630.5Z M630.5 224.5H638V238" fill="none" stroke="#c87878" stroke-width="0.8" stroke-dasharray="1.5,1.2"/><circle cx="633" cy="227" r="1" fill="#c04040"/><circle cx="636" cy="231" r="1" fill="#c04040"/><circle cx="641" cy="227" r="1" fill="#c04040"/><path d="M640.5 237.5L644.5 241.5" stroke="#5a5a5a" stroke-width="1.8"/><polygon points="638,235 643.5,236.8 639.8,240.5" fill="#5a5a5a"/><path d="M655 225L665 222L669 234L661 238Z" fill="none" stroke="#888" stroke-width="0.8" stroke-dasharray="1.6,1.2"/><polygon points="657,230 664,225 663,235" fill="#a6d98c" stroke="#6e8a5f" stroke-width="0.7"/><path d="M681 225L690 221L697 231L690 238L683 234Z" fill="none" stroke="#888" stroke-width="0.8" stroke-dasharray="1.6,1.2"/><circle cx="684" cy="227" r="1.3" fill="#b04040"/><circle cx="687" cy="232" r="1.3" fill="#b04040"/><circle cx="691" cy="228" r="1.3" fill="#b04040"/><circle cx="690" cy="235" r="1.3" fill="#b04040"/><circle cx="694" cy="232" r="1.3" fill="#b04040"/><circle cx="687" cy="224" r="1.3" fill="#b04040"/><rect x="707.5" y="221.5" width="15" height="15" fill="none" stroke="#6a6a6a" stroke-width="0.9" stroke-dasharray="1.8,1.8"/><circle cx="711" cy="226" r="2.3" fill="#3a8fd0"/><circle cx="711" cy="234" r="2.3" fill="#3a8fd0"/><circle cx="717" cy="231" r="3" fill="#a6d98c" stroke="#6a8a55" stroke-width="0.9"/><path d="M719 233L723 238" stroke="#555" stroke-width="1.6"/><circle cx="741" cy="227.5" r="3" fill="none" stroke="#8a8a8a" stroke-width="1.8"/><path d="M743.5 230L749 237" stroke="#8a8a8a" stroke-width="1.6"/><polygon points="758,224 763,220 775,220 775,233 770,238 758,238" fill="#cfcfcf" stroke="#aaa" stroke-width="0.8"/><path d="M758 224H770V238M770 224L775 220" fill="none" stroke="#aaa" stroke-width="0.8"/><polygon points="762,228 768,228 768,236 762,236" fill="#bbb"/><polygon points="794,222 800,233 787,233" fill="#a6d98c" stroke="#6e8a5f" stroke-width="0.8"/><path d="M799.5 233.5L803.5 237.5" stroke="#5a5a5a" stroke-width="1.8"/><polygon points="797,231 802.5,232.8 798.8,236.5" fill="#5a5a5a"/><rect x="806.5" y="217.5" width="25" height="24" rx="3" fill="#dedede" stroke="#a8a8a8"/><circle cx="819" cy="223.5" r="1.2" fill="#8a3030"/><circle cx="815" cy="231.5" r="1.2" fill="#8a3030"/><circle cx="822" cy="232" r="1" fill="#8a3030"/><path d="M825.5 234.5L829.5 238.5" stroke="#333" stroke-width="1.8"/><polygon points="823,232 828.5,233.8 824.8,237.5" fill="#333"/><circle cx="840" cy="235.5" r="2.6" fill="#d82a2a"/><text x="842.5" y="232" font-family="Liberation Sans" font-size="14" fill="#555">?</text><polygon points="868,226 873,236 863,236" fill="#a6d98c" stroke="#6e8a5f" stroke-width="0.8"/><text x="868" y="231" font-family="Liberation Sans" font-size="14" fill="#555">?</text><path d="M896.5 223V236M890 229.5H903" stroke="#c4c4c4" stroke-width="4"/><rect x="915.5" y="227.5" width="14" height="4" fill="#c4c4c4"/><rect x="943" y="224" width="12" height="15" rx="1" fill="#c8c8c8"/><rect x="941.5" y="221.5" width="15" height="2.5" fill="#bbb"/><path d="M946 226V237M949 226V237M952 226V237" stroke="#e0e0e0" stroke-width="0.8"/></svg>
<div class="t" style="left:1281px;top:222.00px;font-size:13px;line-height:16px;font-weight:bold;letter-spacing:0.35px;text-decoration:underline;text-underline-offset:1px">RenderView1</div>
<div class="btn" style="left:1378px;top:217px;width:25px;height:24px;border-color:#c6c6c6"></div>
<div class="btn" style="left:1405px;top:217px;width:25px;height:24px;border-color:#c6c6c6"></div>
<div class="btn" style="left:1432px;top:217px;width:25px;height:24px;border-color:#c6c6c6"></div>
<div class="btn" style="left:1459px;top:217px;width:25px;height:24px;border-color:#c6c6c6"></div>
<svg style="left:1383px;top:221px" width="16" height="15" viewBox="0 0 16 15"><rect x="0.5" y="0.5" width="15" height="14" fill="#c8d4ea" stroke="#a8b2c8"/><rect x="1" y="7" width="14" height="1.2" fill="#8d98b0"/></svg>
<svg style="left:1410px;top:221px" width="16" height="15" viewBox="0 0 16 15"><rect x="0.5" y="0.5" width="15" height="14" fill="#c8d4ea" stroke="#a8b2c8"/><rect x="7.4" y="1" width="1.2" height="13" fill="#8d98b0"/></svg>
<svg style="left:1437px;top:220px" width="16" height="17" viewBox="0 0 16 17"><rect x="1" y="1" width="14" height="15" fill="#fafafa" stroke="#2a2a2a" stroke-width="1.8"/><rect x="1" y="1" width="14" height="4" fill="#2a2a2a"/></svg>
<svg style="left:1466px;top:223px" width="11" height="11" viewBox="0 0 11 11"><rect x="0.5" y="0.5" width="10" height="10" rx="1.5" fill="none" stroke="#555"/><path d="M3 3L8 8M8 3L3 8" stroke="#555" stroke-width="1.8"/></svg>
<div class="a" style="left:310px;top:243px;width:1175px;height:472px;background:#000090;border:0"></div>
<div class="a" style="left:312px;top:245px;width:1171px;height:468px;background:#eef0ff"></div>
<div class="a" style="left:313px;top:246px;width:1169px;height:466px;background:#52576e"></div>
<svg style="left:0;top:0" width="1920" height="1030" viewBox="0 0 1920 1030">
<defs>
<filter id="tex" x="0" y="0" width="100%" height="100%" color-interpolation-filters="sRGB">
<feTurbulence type="fractalNoise" baseFrequency="0.11" numOctaves="3" seed="7" result="n1"/>
<feColorMatrix in="n1" type="matrix" values="1 0 0 0 0  1 0 0 0 0  1 0 0 0 0  0 0 0 0 1" result="a"/>
<feTurbulence type="fractalNoise" baseFrequency="0.03" numOctaves="2" seed="9" result="n2"/>
<feColorMatrix in="n2" type="matrix" values="1 0 0 0 0  1 0 0 0 0  1 0 0 0 0  0 0 0 0 1" result="b"/>
<feComposite in="a" in2="b" operator="arithmetic" k1="0" k2="1.3" k3="0.55" k4="-0.425" result="s"/>
<feColorMatrix in="s" type="matrix" values="1 0 0 0 0  1 0 0 0 0  1 0 0 0 0  0 0 0 0 1" result="g"/>
<feComponentTransfer in="g">
<feFuncR type="table" tableValues="0.02 0.02 0.03 0.04 0.07 0.15 0.30"/>
<feFuncG type="table" tableValues="0.06 0.12 0.20 0.30 0.52 0.76 0.85"/>
<feFuncB type="table" tableValues="0.55 0.70 0.86 0.95 0.96 0.86 0.62"/>
</feComponentTransfer>
<feGaussianBlur stdDeviation="0.75"/>
</filter>
<filter id="tex2" x="0" y="0" width="100%" height="100%" color-interpolation-filters="sRGB">
<feTurbulence type="fractalNoise" baseFrequency="0.2" numOctaves="2" seed="3" result="n1"/>
<feColorMatrix in="n1" type="matrix" values="1.6 0 0 0 -0.3  1.6 0 0 0 -0.3  1.6 0 0 0 -0.3  0 0 0 0 1" result="g"/>
<feComponentTransfer in="g">
<feFuncR type="table" tableValues="0.02 0.02 0.03 0.04 0.07 0.15 0.30"/>
<feFuncG type="table" tableValues="0.06 0.12 0.20 0.30 0.52 0.76 0.85"/>
<feFuncB type="table" tableValues="0.55 0.70 0.86 0.95 0.96 0.86 0.62"/>
</feComponentTransfer>
</filter>
<clipPath id="cf"><polygon points="762,358 1002,365 988,615 753,594"/></clipPath>
<clipPath id="cs"><polygon points="1002,365 1019,383 1007,580 988,615"/></clipPath>
<linearGradient id="cmap" x1="0" y1="0" x2="0" y2="1">
<stop offset="0" stop-color="#d400f4"/>
<stop offset="0.08" stop-color="#ff0090"/>
<stop offset="0.17" stop-color="#ff0000"/>
<stop offset="0.27" stop-color="#ff9000"/>
<stop offset="0.335" stop-color="#ffff00"/>
<stop offset="0.41" stop-color="#a0ff00"/>
<stop offset="0.49" stop-color="#00f000"/>
<stop offset="0.59" stop-color="#00ff90"/>
<stop offset="0.67" stop-color="#00ffff"/>
<stop offset="0.75" stop-color="#0080ff"/>
<stop offset="0.83" stop-color="#0000ff"/>
<stop offset="0.90" stop-color="#000080"/>
<stop offset="1" stop-color="#0a0a18"/>
</linearGradient>
</defs>
<g clip-path="url(#cf)"><rect x="740" y="350" width="270" height="270" filter="url(#tex)"/></g>
<g clip-path="url(#cs)"><rect x="985" y="360" width="40" height="260" filter="url(#tex2)"/></g>
<filter id="bl" x="-50%" y="-50%" width="200%" height="200%"><feGaussianBlur stdDeviation="2.5"/></filter>
<g clip-path="url(#cf)" fill="#52576e" filter="url(#bl)" opacity="0.7">
<ellipse cx="756" cy="565" rx="5" ry="22"/>
<ellipse cx="775" cy="597" rx="14" ry="5"/>
<ellipse cx="850" cy="604" rx="10" ry="4"/>
<ellipse cx="960" cy="610" rx="12" ry="5"/>
<ellipse cx="905" cy="602" rx="7" ry="3"/>
</g>
<polygon points="762,358 1002,365 988,615 753,594" fill="none" stroke="#e4e4ec" stroke-width="1"/>
<polyline points="1002,365 1019,383 1007,580 988,615" fill="none" stroke="#e4e4ec" stroke-width="1"/>
<rect x="1366" y="546.5" width="16" height="153" fill="url(#cmap)"/>
<g fill="#e6e6ea">
<rect x="1379" y="546.5" width="12" height="2"/>
<rect x="1379" y="572.5" width="12" height="2"/>
<rect x="1379" y="636.5" width="12" height="2"/>
<rect x="1379" y="699" width="12" height="2"/>
</g>
<!-- axes -->
<line x1="371" y1="653" x2="373" y2="626" stroke="#3cc43c" stroke-width="1.6"/>
<polygon points="370.5,629 375.5,629 373,619" fill="#3cc43c"/>
<line x1="371" y1="653" x2="346" y2="651.5" stroke="#c8c048" stroke-width="1.6"/>
<polygon points="347,648.5 347,654 340.5,651" fill="#c8c048"/>
<circle cx="375.7" cy="652.5" r="2.3" fill="#f02020"/>
<g stroke="#dcdcdc" stroke-width="0.9" fill="none">
<path d="M374 621.5H379L374.5 627.5H380"/>
<path d="M348.5 645.5L350.5 648.5L352.5 645.5M350.5 648.5V652"/>
<path d="M379 647L383 652M383 647L379 652"/>
</g>
</svg>
<div class="t" style="left:1397px;top:535.96px;font-size:16px;line-height:19px;color:#e8e8ec;letter-spacing:-0.1px">1.2e+02</div>
<div class="t" style="left:1397px;top:561.96px;font-size:16px;line-height:19px;color:#e8e8ec;letter-spacing:-0.1px">100</div>
<div class="t" style="left:1397px;top:625.96px;font-size:16px;line-height:19px;color:#e8e8ec;letter-spacing:-0.1px">50</div>
<div class="t" style="left:1397px;top:688.46px;font-size:16px;line-height:19px;color:#e8e8ec;letter-spacing:-0.1px">0.0e+00</div>
<div class="t" style="left:1468px;top:623px;width:0;height:0"><div style="position:absolute;left:0;top:0;transform:translate(-50%,-50%) rotate(-90deg);font-size:16px;line-height:18px;color:#e8e8ec;white-space:nowrap">HI density</div></div>
<svg style="left:891px;top:720px" width="16" height="2" viewBox="0 0 16 2"><rect x="0" y="0" width="1.2" height="1.2" fill="#9a9a9a"/><rect x="3" y="0" width="1.2" height="1.2" fill="#9a9a9a"/><rect x="6" y="0" width="1.2" height="1.2" fill="#9a9a9a"/><rect x="9" y="0" width="1.2" height="1.2" fill="#9a9a9a"/><rect x="12" y="0" width="1.2" height="1.2" fill="#9a9a9a"/><rect x="15" y="0" width="1.2" height="1.2" fill="#9a9a9a"/></svg>
<svg style="left:1491px;top:589px" width="2" height="16" viewBox="0 0 2 16"><rect x="0" y="0" width="1.2" height="1.2" fill="#9a9a9a"/><rect x="0" y="3" width="1.2" height="1.2" fill="#9a9a9a"/><rect x="0" y="6" width="1.2" height="1.2" fill="#9a9a9a"/><rect x="0" y="9" width="1.2" height="1.2" fill="#9a9a9a"/><rect x="0" y="12" width="1.2" height="1.2" fill="#9a9a9a"/><rect x="0" y="15" width="1.2" height="1.2" fill="#9a9a9a"/></svg>
<svg style="left:304px;top:592px" width="2" height="13" viewBox="0 0 2 13"><rect x="0" y="0" width="1.2" height="1.2" fill="#b0b0b0"/><rect x="0" y="3" width="1.2" height="1.2" fill="#b0b0b0"/><rect x="0" y="6" width="1.2" height="1.2" fill="#b0b0b0"/><rect x="0" y="9" width="1.2" height="1.2" fill="#b0b0b0"/><rect x="0" y="12" width="1.2" height="1.2" fill="#b0b0b0"/></svg>
<div class="t" style="left:1498px;top:188.50px;font-size:13px;line-height:16px;color:#111;letter-spacing:-0.25px">Selection Display Inspector</div>
<svg style="left:1893px;top:190px" width="11" height="11" viewBox="0 0 11 11"><rect x="0.5" y="0.5" width="10" height="10" rx="1.5" fill="none" stroke="#555"/><rect x="4" y="2.5" width="4.5" height="4.5" fill="none" stroke="#555" stroke-width="0.9"/><rect x="2.5" y="4" width="4.5" height="4.5" fill="#f0f0f0" stroke="#555" stroke-width="0.9"/></svg>
<svg style="left:1907px;top:190px" width="11" height="11" viewBox="0 0 11 11"><rect x="0.5" y="0.5" width="10" height="10" rx="1.5" fill="none" stroke="#555"/><path d="M3 3L8 8M8 3L3 8" stroke="#444" stroke-width="1.8"/></svg>
<div class="btn" style="left:1494px;top:206px;width:425px;height:26px;"></div>
<div class="btn" style="left:1494px;top:237px;width:425px;height:26px;"></div>
<svg style="left:1667px;top:210px" width="17" height="17" viewBox="0 0 17 17"><polygon points="2,5 6,1.5 15.5,1.5 15.5,11 12,15 2,15" fill="#f2bd2a" stroke="#6d6d4a" stroke-width="0.9"/><path d="M2 5H12V15M12 5L15.5 1.5" fill="none" stroke="#6d6d4a" stroke-width="0.9"/></svg>
<div class="t" style="left:1687px;top:211.50px;font-size:13px;line-height:16px;">Cell Labels</div>
<svg style="left:1905.0px;top:216.0px" width="10" height="5" viewBox="0 0 10 5"><polygon points="0,0 10,0 5.0,5" fill="#404040"/></svg>
<svg style="left:1669px;top:246px" width="6" height="6" viewBox="0 0 6 6"><circle cx="3" cy="3" r="2.8" fill="#f2b430" stroke="#b08020" stroke-width="0.5"/></svg>
<div class="t" style="left:1683px;top:242.50px;font-size:13px;line-height:16px;">Point Labels</div>
<svg style="left:1905.0px;top:247.0px" width="10" height="5" viewBox="0 0 10 5"><polygon points="0,0 10,0 5.0,5" fill="#404040"/></svg>
<div class="btn" style="left:1494px;top:267px;width:125px;height:27px;"></div>
<svg style="left:1498px;top:271px" width="19" height="19" viewBox="0 0 19 19"><circle cx="9.5" cy="9.5" r="8.8" fill="#f0f" stroke="#600060" stroke-width="1"/></svg>
<div class="t" style="left:1519px;top:273.50px;font-size:13px;line-height:16px;">Selection Color</div>
<div class="btn" style="left:1494px;top:298px;width:190px;height:27px;"></div>
<svg style="left:1498px;top:302px" width="19" height="19" viewBox="0 0 19 19"><circle cx="9.5" cy="9.5" r="8.8" fill="#7400ee" stroke="#3a0070" stroke-width="1"/></svg>
<div class="t" style="left:1519px;top:304.50px;font-size:13px;line-height:16px;">Interactive Selection Color</div>
<div class="btnd" style="left:1860px;top:267px;width:28px;height:27px;"></div>
<div class="btn" style="left:1892px;top:267px;width:27px;height:27px;"></div>
<div class="btn" style="left:1892px;top:298px;width:27px;height:27px;"></div>
<div class="t" style="left:312px;top:726.50px;font-size:13px;line-height:16px;color:#111;">Animation View</div>
<svg style="left:1460px;top:728px" width="11" height="11" viewBox="0 0 11 11"><rect x="0.5" y="0.5" width="10" height="10" rx="1.5" fill="none" stroke="#555"/><rect x="4" y="2.5" width="4.5" height="4.5" fill="none" stroke="#555" stroke-width="0.9"/><rect x="2.5" y="4" width="4.5" height="4.5" fill="#f0f0f0" stroke="#555" stroke-width="0.9"/></svg>
<svg style="left:1474px;top:728px" width="11" height="11" viewBox="0 0 11 11"><rect x="0.5" y="0.5" width="10" height="10" rx="1.5" fill="none" stroke="#555"/><path d="M3 3L8 8M8 3L3 8" stroke="#444" stroke-width="1.8"/></svg>
<div class="t" style="left:310px;top:751.50px;font-size:13px;line-height:16px;">Mode:</div>
<div class="btn" style="left:348px;top:746px;width:145px;height:24px;"></div>
<div class="t" style="left:353px;top:750.50px;font-size:13px;line-height:16px;">Sequence</div>
<svg style="left:472.5px;top:755.5px" width="10" height="5" viewBox="0 0 10 5"><polygon points="0,0 10,0 5.0,5" fill="#404040"/></svg>
<div class="t" style="left:495px;top:752.00px;font-size:13px;line-height:16px;">Time:</div>
<div class="inp" style="left:531px;top:746px;width:108px;height:25px;"></div>
<div class="t" style="left:534px;top:750.50px;font-size:13px;line-height:16px;">1</div>
<div class="btnd" style="left:641px;top:746px;width:38px;height:25px;"></div>
<div class="a" style="left:662px;top:747px;width:1px;height:23px;background:#d8d8d8"></div>
<div class="t" style="left:646px;top:751.50px;font-size:13px;line-height:16px;color:#b5b5b5;">0</div>
<svg style="left:666px;top:750px" width="8" height="6" viewBox="0 0 8 6"><polygon points="0,5 8,5 4,0" fill="#d0d0d0"/></svg>
<svg style="left:666px;top:761px" width="8" height="6" viewBox="0 0 8 6"><polygon points="0,0 8,0 4,5" fill="#d0d0d0"/></svg>
<div class="t" style="left:682px;top:752.00px;font-size:13px;line-height:16px;">Start Time:</div>
<div class="inp" style="left:750px;top:746px;width:134px;height:25px;"></div>
<div class="t" style="left:753px;top:750.50px;font-size:13px;line-height:16px;">0</div>
<div class="btn" style="left:886px;top:745px;width:27px;height:26px;"></div>
<div class="t" style="left:916px;top:751.00px;font-size:13px;line-height:16px;">End Time:</div>
<div class="inp" style="left:977px;top:745px;width:135px;height:26px;"></div>
<div class="t" style="left:980px;top:750.50px;font-size:13px;line-height:16px;">1</div>
<div class="btn" style="left:1114px;top:745px;width:28px;height:26px;"></div>
<div class="t" style="left:1144px;top:751.00px;font-size:13px;line-height:16px;">No. Frames:</div>
<div class="inp" style="left:1217px;top:745px;width:134px;height:26px;"></div>
<div class="t" style="left:1220px;top:750.50px;font-size:13px;line-height:16px;">250</div>
<svg style="left:891px;top:749px" width="17" height="19" viewBox="0 0 17 19"><defs><radialGradient id="lk" cx="0.5" cy="0.5" r="0.6"><stop offset="0" stop-color="#e4f8d8"/><stop offset="0.45" stop-color="#8fd074"/><stop offset="1" stop-color="#4f9a3a"/></radialGradient></defs><path d="M3.8 9.5V6.2A4.7 4.7 0 0 1 13.2 6.2V9.5" fill="none" stroke="#8a8a8a" stroke-width="2.2"/><rect x="1.5" y="9" width="14" height="9" rx="1.2" fill="url(#lk)" stroke="#5a9a48" stroke-width="0.7"/></svg>
<svg style="left:1120px;top:749px" width="17" height="19" viewBox="0 0 17 19"><defs><radialGradient id="lk" cx="0.5" cy="0.5" r="0.6"><stop offset="0" stop-color="#e4f8d8"/><stop offset="0.45" stop-color="#8fd074"/><stop offset="1" stop-color="#4f9a3a"/></radialGradient></defs><path d="M3.8 9.5V6.2A4.7 4.7 0 0 1 13.2 6.2V9.5" fill="none" stroke="#8a8a8a" stroke-width="2.2"/><rect x="1.5" y="9" width="14" height="9" rx="1.2" fill="url(#lk)" stroke="#5a9a48" stroke-width="0.7"/></svg>
<div class="a" style="left:310px;top:775px;width:1175px;height:228px;border:1px solid #c4c4c4;background:#f0f0f0"></div>
<div class="a" style="left:310px;top:775px;width:25px;height:37px;background:linear-gradient(#fbfbfb,#e9e9e9);border:1px solid #c4c4c4"></div>
<div class="a" style="left:334px;top:775px;width:26px;height:37px;background:linear-gradient(#fbfbfb,#e9e9e9);border:1px solid #c4c4c4"></div>
<div class="a" style="left:359px;top:775px;width:130px;height:37px;background:linear-gradient(#fbfbfb,#e9e9e9);border:1px solid #c4c4c4"></div>
<div class="a" style="left:310px;top:811px;width:25px;height:38px;background:linear-gradient(#fbfbfb,#e9e9e9);border:1px solid #c4c4c4"></div>
<div class="a" style="left:334px;top:811px;width:26px;height:38px;background:linear-gradient(#fbfbfb,#e9e9e9);border:1px solid #c4c4c4"></div>
<div class="a" style="left:359px;top:811px;width:130px;height:38px;background:linear-gradient(#fbfbfb,#e9e9e9);border:1px solid #c4c4c4"></div>
<div class="a" style="left:310px;top:848px;width:25px;height:38px;background:linear-gradient(#fbfbfb,#e9e9e9);border:1px solid #c4c4c4"></div>
<div class="a" style="left:334px;top:848px;width:26px;height:38px;background:linear-gradient(#fbfbfb,#e9e9e9);border:1px solid #c4c4c4"></div>
<div class="a" style="left:359px;top:848px;width:130px;height:38px;background:linear-gradient(#fbfbfb,#e9e9e9);border:1px solid #c4c4c4"></div>
<div class="a" style="left:310px;top:885px;width:25px;height:38px;background:linear-gradient(#fbfbfb,#e9e9e9);border:1px solid #c4c4c4"></div>
<div class="a" style="left:334px;top:885px;width:26px;height:38px;background:linear-gradient(#fbfbfb,#e9e9e9);border:1px solid #c4c4c4"></div>
<div class="a" style="left:359px;top:885px;width:130px;height:38px;background:linear-gradient(#fbfbfb,#e9e9e9);border:1px solid #c4c4c4"></div>
<div class="a" style="left:310px;top:922px;width:25px;height:38px;background:linear-gradient(#fbfbfb,#e9e9e9);border:1px solid #c4c4c4"></div>
<div class="a" style="left:334px;top:922px;width:26px;height:38px;background:linear-gradient(#fbfbfb,#e9e9e9);border:1px solid #c4c4c4"></div>
<div class="a" style="left:359px;top:922px;width:130px;height:38px;background:linear-gradient(#fbfbfb,#e9e9e9);border:1px solid #c4c4c4"></div>
<div class="a" style="left:488px;top:775px;width:997px;height:185px;background:#fff;border-top:2px solid #111;border-left:1px solid #111;border-right:2px solid #111;border-bottom:2px solid #111"></div>
<div class="a" style="left:489px;top:812px;width:994px;height:37px;background:#f0f0f0"></div>
<div class="a" style="left:488px;top:811px;width:996px;height:1.5px;background:#111"></div>
<div class="a" style="left:488px;top:848px;width:996px;height:1.5px;background:#111"></div>
<div class="a" style="left:488px;top:885px;width:996px;height:1.5px;background:#111"></div>
<div class="a" style="left:488px;top:922px;width:996px;height:1.5px;background:#111"></div>
<div class="a" style="left:490px;top:808px;width:992px;height:4px;background-image:linear-gradient(90deg,#111 1px,transparent 1px);background-size:4px 4px"></div>
<div class="a" style="left:1478px;top:806px;width:5px;height:6px;background:#111"></div>
<div class="t" style="left:490px;top:787.34px;font-size:12px;line-height:15px;">0</div>
<div class="t" style="left:793px;top:787.34px;font-size:12px;line-height:15px;">0.333333</div>
<div class="t" style="left:1124.5px;top:787.34px;font-size:12px;line-height:15px;">0.666667</div>
<div class="t" style="left:1476px;top:787.34px;font-size:12px;line-height:15px;">1</div>
<div class="t" style="left:491px;top:862.34px;font-size:12px;line-height:15px;">0</div>
<div class="t" style="left:1472.5px;top:862.34px;font-size:12px;line-height:15px;">0</div>
<div class="t" style="left:491px;top:899.34px;font-size:12px;line-height:15px;">0</div>
<div class="t" style="left:1472.5px;top:899.34px;font-size:12px;line-height:15px;">0</div>
<div class="t" style="left:362px;top:786.50px;font-size:13px;line-height:16px;">Time</div>
<div class="t" style="left:362px;top:823.50px;font-size:13px;line-height:16px;">TimeKeeper1 - Time</div>
<div class="t" style="left:362px;top:860.50px;font-size:13px;line-height:16px;letter-spacing:-0.15px">HI_2.vtk - Visibility</div>
<div class="t" style="left:362px;top:897.50px;font-size:13px;line-height:16px;letter-spacing:-0.15px">HI_3.vtk - Visibility</div>
<div class="t" style="left:362px;top:934.50px;font-size:13px;line-height:16px;">Camera</div>
<div class="inp" style="left:337px;top:822px;width:17px;height:17px;border-radius:1px;border-color:#b4b4b4"></div>
<svg style="left:340px;top:825px" width="11" height="11" viewBox="0 0 11 11"><path d="M1 5.5L4.2 10L10 0.5" fill="none" stroke="#000" stroke-width="2.2"/></svg>
<div class="inp" style="left:337px;top:859px;width:17px;height:17px;border-radius:1px;border-color:#b4b4b4"></div>
<svg style="left:340px;top:862px" width="11" height="11" viewBox="0 0 11 11"><path d="M1 5.5L4.2 10L10 0.5" fill="none" stroke="#000" stroke-width="2.2"/></svg>
<div class="inp" style="left:337px;top:896px;width:17px;height:17px;border-radius:1px;border-color:#b4b4b4"></div>
<svg style="left:340px;top:899px" width="11" height="11" viewBox="0 0 11 11"><path d="M1 5.5L4.2 10L10 0.5" fill="none" stroke="#000" stroke-width="2.2"/></svg>
<div class="inp" style="left:337px;top:933px;width:17px;height:17px;border-radius:1px;border-color:#b4b4b4"></div>
<svg style="left:340px;top:936px" width="11" height="11" viewBox="0 0 11 11"><path d="M1 5.5L4.2 10L10 0.5" fill="none" stroke="#000" stroke-width="2.2"/></svg>
<svg style="left:315px;top:861px" width="14" height="14" viewBox="0 0 14 14"><path d="M3.2 2.8L11.2 10.8M11.2 2.8L3.2 10.8" stroke="#e02a2a" stroke-width="4.4" stroke-linecap="round"/></svg>
<svg style="left:315px;top:898px" width="14" height="14" viewBox="0 0 14 14"><path d="M3.2 2.8L11.2 10.8M11.2 2.8L3.2 10.8" stroke="#e02a2a" stroke-width="4.4" stroke-linecap="round"/></svg>
<svg style="left:315px;top:935px" width="14" height="14" viewBox="0 0 14 14"><path d="M3.2 2.8L11.2 10.8M11.2 2.8L3.2 10.8" stroke="#e02a2a" stroke-width="4.4" stroke-linecap="round"/></svg>
<div class="a" style="left:310px;top:959px;width:25px;height:38px;background:#f0f0f0;border:1px solid #c4c4c4;border-top:none"></div>
<svg style="left:315px;top:971px" width="15" height="15" viewBox="0 0 15 15"><path d="M7.5 1V14M1 7.5H14" stroke="#2f95d0" stroke-width="4"/></svg>
<div class="btn" style="left:341px;top:967px;width:79px;height:24px;"></div>
<div class="t" style="left:346px;top:972.50px;font-size:13px;line-height:16px;">HI_2.vtk</div>
<svg style="left:399.5px;top:976.5px" width="10" height="5" viewBox="0 0 10 5"><polygon points="0,0 10,0 5.0,5" fill="#404040"/></svg>
<div class="btn" style="left:427px;top:967px;width:78px;height:24px;"></div>
<div class="t" style="left:432px;top:972.50px;font-size:13px;line-height:16px;letter-spacing:-0.3px">Visibility</div>
<svg style="left:484.5px;top:976.5px" width="10" height="5" viewBox="0 0 10 5"><polygon points="0,0 10,0 5.0,5" fill="#404040"/></svg>
<div class="btn" style="left:961px;top:1009px;width:20px;height:19px;border-radius:3px"></div>
<svg style="left:966px;top:1014px" width="9" height="9" viewBox="0 0 9 9"><path d="M2.2 2.2L7 7M7 2.2L2.2 7" stroke="#8c8c8c" stroke-width="3" stroke-linecap="round"/></svg>
<div class="a" style="left:983px;top:1009px;width:935px;height:18px;border-top:1px solid #a0a0a0;border-left:1px solid #a0a0a0;background:#efefef"></div>
<div class="a" style="left:983px;top:1027px;width:937px;height:3px;background:#fff"></div>
<svg style="left:0;top:0" width="1920" height="1030" viewBox="0 0 1920 1030"><polygon points="27,534 30,532 35,532 35,542 32,544 27,544" fill="#c8c8c8" stroke="#aaa" stroke-width="0.7"/><rect x="29.5" y="534.5" width="3" height="9" fill="#e8e8e8" stroke="#b0b0b0" stroke-width="0.5"/><polygon points="33,537 38,531 36.5,529.5 41,528 40,532.5 38.5,531.5 34.5,538" fill="#c8c8c8" stroke="#aaa" stroke-width="0.6"/><circle cx="115.5" cy="534" r="7" fill="none" stroke="#9a9a9a" stroke-width="2.4"/><path d="M111 539L120 529" stroke="#9a9a9a" stroke-width="2.4"/><path d="M191.8 529.8L200.2 538.2M200.2 529.8L191.8 538.2" stroke="#e02828" stroke-width="4.4" stroke-linecap="round"/><text x="266.5" y="543" font-family="Liberation Sans" font-size="22" fill="#a6d68a" stroke="#6f9a58" stroke-width="0.9">?</text><polygon points="281.05,567.83 282.93,568.03 282.93,569.97 281.05,570.17 280.39,571.74 281.59,573.21 280.21,574.59 278.74,573.39 277.17,574.05 276.97,575.93 275.03,575.93 274.83,574.05 273.26,573.39 271.79,574.59 270.41,573.21 271.61,571.74 270.95,570.17 269.07,569.97 269.07,568.03 270.95,567.83 271.61,566.26 270.41,564.79 271.79,563.41 273.26,564.61 274.83,563.95 275.03,562.07 276.97,562.07 277.17,563.95 278.74,564.61 280.21,563.41 281.59,564.79 280.39,566.26" fill="#c9c9c9" stroke="#8a8a8a" stroke-width="0.9" stroke-linejoin="round"/><circle cx="276" cy="569" r="2.31" fill="#f6f6f6" stroke="#8a8a8a" stroke-width="0.9"/><rect x="219.5" y="594.5" width="10" height="12" fill="#f4f4f4" stroke="#777" stroke-width="0.9"/><rect x="214.5" y="598.5" width="10" height="12" fill="#f4f4f4" stroke="#777" stroke-width="0.9"/><path d="M216.5 602H222.5M216.5 604.5H222.5M216.5 607H222.5" stroke="#777" stroke-width="0.7"/><rect x="219.5" y="635.5" width="10" height="12" fill="#f4f4f4" stroke="#777" stroke-width="0.9"/><rect x="214.5" y="639.5" width="10" height="12" fill="#f4f4f4" stroke="#777" stroke-width="0.9"/><path d="M216.5 643H222.5M216.5 645.5H222.5M216.5 648H222.5" stroke="#777" stroke-width="0.7"/><rect x="255.5" y="595.5" width="9" height="12" rx="1" fill="#c4c4c4" stroke="#aaa" stroke-width="0.8"/><rect x="250.5" y="598.5" width="10" height="12" fill="#f2f2f2" stroke="#aaa" stroke-width="0.8"/><path d="M252.5 602H258.5M252.5 604.5H258.5M252.5 607H258.5" stroke="#bbb" stroke-width="0.7"/><rect x="255.5" y="636.5" width="9" height="12" rx="1" fill="#c4c4c4" stroke="#aaa" stroke-width="0.8"/><rect x="250.5" y="639.5" width="10" height="12" fill="#f2f2f2" stroke="#aaa" stroke-width="0.8"/><path d="M252.5 643H258.5M252.5 645.5H258.5M252.5 648H258.5" stroke="#bbb" stroke-width="0.7"/><rect x="32" y="761" width="16" height="10" fill="url(#cbar2)"/><path d="M32 766H48M43 762V770" stroke="#6a6a6a" stroke-width="0.6"/><circle cx="36" cy="759.5" r="4.8" fill="#a0d488" stroke="#5f8a50" stroke-width="0.8"/><defs><linearGradient id="cbar2" x1="0" y1="0" x2="1" y2="0"><stop offset="0" stop-color="#2a5aa8"/><stop offset="0.45" stop-color="#38b0d0"/><stop offset="0.7" stop-color="#88c850"/><stop offset="1" stop-color="#f0b020"/></linearGradient></defs><rect x="103" y="759" width="16" height="11" fill="#c4c4c4"/><path d="M107 765A3 3 0 1 1 110 762M112 761A3 3 0 1 1 111 756" fill="none" stroke="#7a7a7a" stroke-width="1.8"/><polygon points="140,761 144,757.5 144,759.5 152,759.5 152,757.5 156,761 152,764.5 152,762.5 144,762.5 144,764.5" fill="#cfcfcf" stroke="#b0b0b0" stroke-width="0.6"/><path d="M140 766V772M140 769H156M156 766V772M145.5 767V771M150.5 767V771" stroke="#c4c4c4" stroke-width="0.8"/><polygon points="177,761 181,757.5 181,759.5 189,759.5 189,757.5 193,761 189,764.5 189,762.5 181,762.5 181,764.5" fill="#cfcfcf" stroke="#b0b0b0" stroke-width="0.6"/><path d="M177 766V772M177 769H193M193 766V772M182.5 767V771M187.5 767V771" stroke="#c4c4c4" stroke-width="0.8"/><text x="187" y="772" font-family="Liberation Sans" font-weight="bold" font-size="9" fill="#9a9a9a">c</text><polygon points="214,761 218,757.5 218,759.5 226,759.5 226,757.5 230,761 226,764.5 226,762.5 218,762.5 218,764.5" fill="#cfcfcf" stroke="#b0b0b0" stroke-width="0.6"/><path d="M214 766V772M214 769H230M230 766V772M219.5 767V771M224.5 767V771" stroke="#c4c4c4" stroke-width="0.8"/><text x="224" y="772" font-family="Liberation Sans" font-weight="bold" font-size="9" fill="#9a9a9a">t</text><rect x="250" y="757" width="14" height="11" fill="#d8d8d8" stroke="#c0c0c0" stroke-width="0.6"/><path d="M253 764Q253 760 256.5 762Q260 760 260 764L256.5 769Z" fill="#a8a8a8"/><polygon points="1910.55,279.33 1912.43,279.53 1912.43,281.47 1910.55,281.67 1909.89,283.24 1911.09,284.71 1909.71,286.09 1908.24,284.89 1906.67,285.55 1906.47,287.43 1904.53,287.43 1904.33,285.55 1902.76,284.89 1901.29,286.09 1899.91,284.71 1901.11,283.24 1900.45,281.67 1898.57,281.47 1898.57,279.53 1900.45,279.33 1901.11,277.76 1899.91,276.29 1901.29,274.91 1902.76,276.11 1904.33,275.45 1904.53,273.57 1906.47,273.57 1906.67,275.45 1908.24,276.11 1909.71,274.91 1911.09,276.29 1909.89,277.76" fill="#c9c9c9" stroke="#8a8a8a" stroke-width="0.9" stroke-linejoin="round"/><circle cx="1905.5" cy="280.5" r="2.31" fill="#f6f6f6" stroke="#8a8a8a" stroke-width="0.9"/><polygon points="1910.55,310.33 1912.43,310.53 1912.43,312.47 1910.55,312.67 1909.89,314.24 1911.09,315.71 1909.71,317.09 1908.24,315.89 1906.67,316.55 1906.47,318.43 1904.53,318.43 1904.33,316.55 1902.76,315.89 1901.29,317.09 1899.91,315.71 1901.11,314.24 1900.45,312.67 1898.57,312.47 1898.57,310.53 1900.45,310.33 1901.11,308.76 1899.91,307.29 1901.29,305.91 1902.76,307.11 1904.33,306.45 1904.53,304.57 1906.47,304.57 1906.67,306.45 1908.24,307.11 1909.71,305.91 1911.09,307.29 1909.89,308.76" fill="#c9c9c9" stroke="#8a8a8a" stroke-width="0.9" stroke-linejoin="round"/><circle cx="1905.5" cy="311.5" r="2.31" fill="#f6f6f6" stroke="#8a8a8a" stroke-width="0.9"/><polygon points="1870,277 1874,274 1883,274 1883,281 1879,284 1870,284" fill="#d0d0d0" stroke="#b4b4b4" stroke-width="0.7"/><path d="M1866 275V286H1873" fill="none" stroke="#c0c0c0" stroke-width="0.8" stroke-dasharray="1.5,1.2"/><path d="M1876 284L1880 288" stroke="#b8b8b8" stroke-width="1.2"/></svg>
</body></html>
